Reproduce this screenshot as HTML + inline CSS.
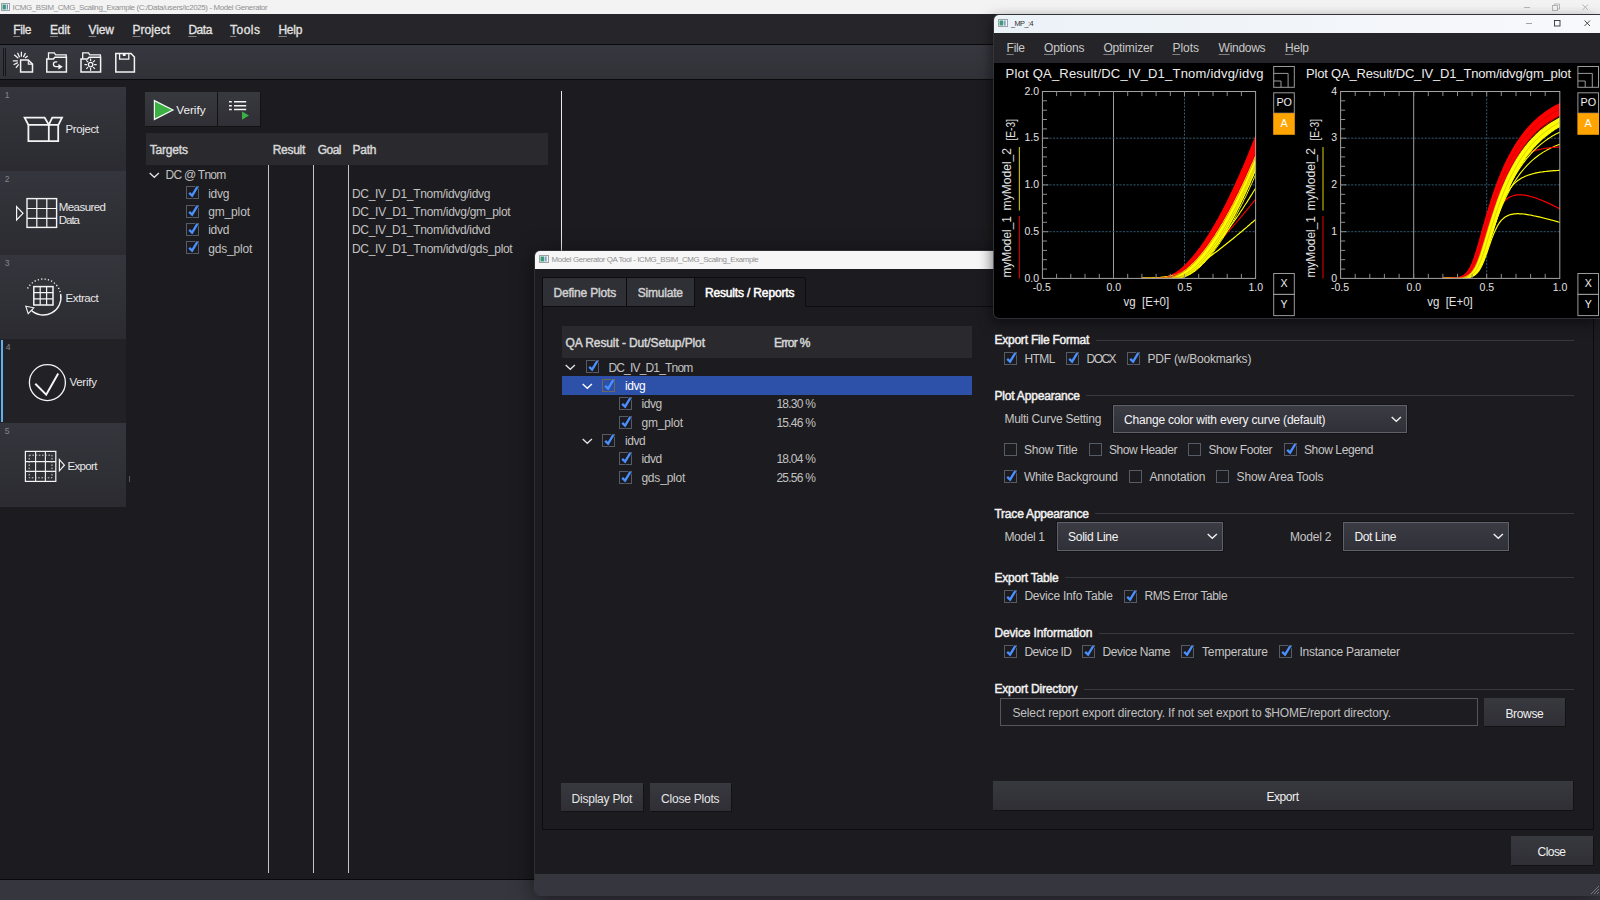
<!DOCTYPE html>
<html lang="en"><head><meta charset="utf-8"><title>Model Generator</title><style>
html,body{margin:0;padding:0;background:#1c1b1f}
body{width:1600px;height:900px;position:relative;overflow:hidden;font-family:"Liberation Sans",sans-serif}
.r{position:absolute;display:block}
.t{position:absolute;white-space:pre;line-height:20px;display:block}
.t u{text-decoration:underline;text-decoration-thickness:1px;text-underline-offset:2px;text-decoration-color:rgba(190,190,195,.6)}
</style></head><body>
<div class="r" style="left:0px;top:0px;width:1600px;height:14px;background:#f3f3f3;"></div>
<svg class="r" style="left:1px;top:3px" width="9" height="8" viewBox="0 0 9 8"><rect x="0.5" y="0.5" width="8" height="7" fill="#f4f6f7" stroke="#9aa4a8" stroke-width="1"/><rect x="1.5" y="1.5" width="3.4" height="5" fill="#3c9a78"/><rect x="5.8" y="1.5" width="0.9" height="5" fill="#3a5fb0"/></svg>
<span class="t" style="left:12.60px;top:-2.38px;font-size:7.9px;color:#909090;letter-spacing:-0.358px;">ICMG_BSIM_CMG_Scaling_Example (C:/Data/users/ic2025) - Model Generator</span>
<svg class="r" style="left:1515px;top:0" width="85" height="14" viewBox="0 0 85 14" fill="none" stroke="#a8a8a8" stroke-width="0.8"><path d="M9 7.5h6"/><rect x="37.5" y="5.5" width="5" height="5"/><path d="M39.5 5.5v-1.5h5v5h-2"/><path d="M67.5 4.5l5.5 5.5M73 4.5l-5.5 5.5"/></svg>
<div class="r" style="left:0px;top:14px;width:1600px;height:30px;background:#26262a;"></div>
<span class="t" style="left:13.20px;top:20.00px;font-size:12px;color:#e4e4e4;letter-spacing:-0.379px;-webkit-text-stroke:0.3px #e4e4e4;"><u>F</u>ile</span>
<span class="t" style="left:50.00px;top:20.00px;font-size:12px;color:#e4e4e4;letter-spacing:-0.226px;-webkit-text-stroke:0.3px #e4e4e4;"><u>E</u>dit</span>
<span class="t" style="left:88.60px;top:20.00px;font-size:12px;color:#e4e4e4;letter-spacing:-0.131px;-webkit-text-stroke:0.3px #e4e4e4;"><u>V</u>iew</span>
<span class="t" style="left:132.60px;top:20.00px;font-size:12px;color:#e4e4e4;letter-spacing:0.008px;-webkit-text-stroke:0.3px #e4e4e4;"><u>P</u>roject</span>
<span class="t" style="left:188.40px;top:20.00px;font-size:12px;color:#e4e4e4;letter-spacing:-0.449px;-webkit-text-stroke:0.3px #e4e4e4;"><u>D</u>ata</span>
<span class="t" style="left:230.00px;top:20.00px;font-size:12px;color:#e4e4e4;letter-spacing:0.496px;-webkit-text-stroke:0.3px #e4e4e4;"><u>T</u>ools</span>
<span class="t" style="left:278.40px;top:20.00px;font-size:12px;color:#e4e4e4;letter-spacing:-0.227px;-webkit-text-stroke:0.3px #e4e4e4;"><u>H</u>elp</span>
<div class="r" style="left:0px;top:44px;width:1600px;height:1px;background:#0a0a0c;"></div>
<div class="r" style="left:0px;top:45px;width:1600px;height:34px;background:linear-gradient(#37373f,#313138);"></div>
<div class="r" style="left:0px;top:79px;width:1600px;height:1px;background:#0a0a0c;"></div>
<div class="r" style="left:0px;top:80px;width:1600px;height:800px;background:#1c1b1f;"></div>
<div class="r" style="left:2.5px;top:48px;width:1px;height:28px;background:#15151a;"></div>
<div class="r" style="left:4.5px;top:48px;width:1px;height:28px;background:#15151a;"></div>
<svg class="r" style="left:12px;top:50px" width="126" height="25" viewBox="12 50 126 25" fill="none" stroke="#f4f4f4" stroke-width="1.5" stroke-linejoin="miter">
<path d="M25.0 58.0L27.7 55.9M23.4 57.1L25.5 53.0M21.4 56.8L21.4 51.8M19.6 57.2L17.5 52.7M18.3 58.2L14.2 54.8M17.8 60.8L12.8 60.8M17.8 62.6L13.6 64.8M18.7 64.3L15.9 67.9" stroke-width="1.25"/>
<path d="M20.6 59.9h7.7l4.2 4.2v7.9h-11.9z" fill="#34343b"/><path d="M28.3 59.9v4.2h4.2" stroke-width="1.1"/>
<path d="M46.8 59h6.5l1.6-1.8h11.5v14.8h-19.6z"/><path d="M48.5 59v-6.2h5.8l1.3 2h10.6v2.4" stroke-width="1.3"/>
<path d="M57.2 61.8h-1.4a2.4 2.4 0 0 0 0 4.8h3.2" stroke-width="1.3"/><path d="M58.4 64l4.4 2.7-4.4 2.7z" fill="#f4f4f4" stroke="none"/>
<path d="M81.0 59h6.5l1.6-1.8h11.5v14.8h-19.6z"/><path d="M82.7 59v-6.2h5.8l1.3 2h10.6v2.4" stroke-width="1.3"/>
<circle cx="90.6" cy="64.6" r="2.2" stroke-width="1.3"/><path d="M94.1 64.6L96.7 64.6M93.1 62.1L94.9 60.3M90.6 61.1L90.6 58.5M88.1 62.1L86.3 60.3M87.1 64.6L84.5 64.6M88.1 67.1L86.3 68.9M90.6 68.1L90.6 70.7M93.1 67.1L94.9 68.9" stroke-width="1.2"/>
<path d="M115.8 53.4h15.2l3.4 3.6v15.1h-18.6z"/><path d="M119.6 53.4v5.8h9.2v-5.8" stroke-width="1.3"/><rect x="122.8" y="53.6" width="2.8" height="2.4" fill="#f4f4f4" stroke="none"/>
</svg>
<div class="r" style="left:0px;top:87px;width:126px;height:84px;background:linear-gradient(#35353d,#2b2b31);"></div>
<span class="t" style="left:4.80px;top:85.38px;font-size:8.6px;color:#85858c;">1</span>
<div class="r" style="left:0px;top:171px;width:126px;height:84px;background:linear-gradient(#35353d,#2b2b31);"></div>
<span class="t" style="left:4.80px;top:169.38px;font-size:8.6px;color:#85858c;">2</span>
<div class="r" style="left:0px;top:255px;width:126px;height:84px;background:linear-gradient(#35353d,#2b2b31);"></div>
<span class="t" style="left:4.80px;top:253.38px;font-size:8.6px;color:#85858c;">3</span>
<div class="r" style="left:0px;top:339px;width:126px;height:84px;background:#222126;"></div>
<div class="r" style="left:1px;top:340px;width:2px;height:82px;background:#5fb0ee;"></div>
<span class="t" style="left:5.80px;top:337.38px;font-size:8.6px;color:#85858c;">4</span>
<div class="r" style="left:0px;top:423px;width:126px;height:84px;background:linear-gradient(#35353d,#2b2b31);"></div>
<span class="t" style="left:4.80px;top:421.38px;font-size:8.6px;color:#85858c;">5</span>
<span class="t" style="left:65.60px;top:119.18px;font-size:11.5px;color:#e8e8e8;letter-spacing:-0.399px;">Project</span>
<span class="t" style="left:58.75px;top:196.78px;font-size:11.5px;color:#e8e8e8;letter-spacing:-0.556px;">Measured</span>
<span class="t" style="left:58.75px;top:209.93px;font-size:11.5px;color:#e8e8e8;letter-spacing:-1.014px;">Data</span>
<span class="t" style="left:65.60px;top:288.18px;font-size:11.5px;color:#e8e8e8;letter-spacing:-0.439px;">Extract</span>
<span class="t" style="left:69.40px;top:372.18px;font-size:11.5px;color:#e8e8e8;letter-spacing:-0.233px;">Verify</span>
<span class="t" style="left:67.50px;top:456.18px;font-size:11.5px;color:#e8e8e8;letter-spacing:-0.648px;">Export</span>
<svg class="r" style="left:0;top:87px" width="126" height="420" viewBox="0 87 126 420" fill="none" stroke="#f4f4f4" stroke-width="1.3">
<g stroke-width="1.8"><path d="M28.4 124.8h29.8v16.4h-29.8z"/><path d="M48.8 124.8v16.4"/><path d="M28.4 124.8l-3.8-7.2h20l4.2 7.2 3.4-7.2h9.8l-3.6 7.2"/></g>
<path d="M16.6 206.6l6.4 6.7-6.4 6.7z" stroke-width="1.2"/>
<rect x="27" y="198.6" width="29.6" height="28.8" stroke-width="1.4"/><path d="M36.8 198.6v28.8M46.8 198.6v28.8M27 208.5h29.6M27 218.3h29.6" stroke-width="1.2"/>
<rect x="33.8" y="286.6" width="19.2" height="18.4" stroke-width="1.5"/><path d="M40.2 286.6v18.4M46.6 286.6v18.4M33.8 292.7h19.2M33.8 298.9h19.2" stroke-width="1.2"/>
<path d="M60.6 294a17.6 17.6 0 0 1-29.6 16" stroke-width="1.4"/><path d="M27.6 288.5a17.6 17.6 0 0 1 33 5.5" stroke-width="1.4" stroke-dasharray="1.2 2.2"/>
<path d="M25.8 306.2l8 1.6-5.6 5.8z" stroke-width="1.1" fill="#2e2e35"/>
<circle cx="47.4" cy="382.6" r="18" stroke-width="1.3"/><path d="M35.3 383.8l10.9 10.9 12-21.2" stroke-width="2"/>
<rect x="25.4" y="451.4" width="30.4" height="30" stroke-width="1.2"/><path d="M35.6 451.4v30M45.4 451.4v30M25.4 461.6h30.4M25.4 471.4h30.4" stroke-width="1.1"/>
<rect x="29.2" y="455.2" width="22.8" height="22.6" stroke-width="1" stroke-dasharray="1.6 1.6" stroke="#d0d0d0"/>
<path d="M59.4 459.6l5 5.6-5 5.6z" stroke-width="1.2"/>
</svg>
<div class="r" style="left:129px;top:476px;width:1px;height:6px;background:#55555c;"></div>
<div class="r" style="left:145px;top:91.5px;width:71.5px;height:34px;background:linear-gradient(#38383f,#2f2f35);box-shadow:1px 1px 0 #121214;"></div>
<div class="r" style="left:218px;top:91.5px;width:42px;height:34px;background:linear-gradient(#38383f,#2f2f35);box-shadow:1px 1px 0 #121214;"></div>
<svg class="r" style="left:150px;top:97px" width="30" height="26" viewBox="150 97 30 26"><path d="M154.4 100.6l18.6 9.4-18.6 9.4z" fill="#3bb143" stroke="#f6f6f6" stroke-width="1.2" stroke-linejoin="miter"/></svg>
<span class="t" style="left:176.20px;top:99.87px;font-size:11.8px;color:#f0f0f0;letter-spacing:-0.023px;">Verify</span>
<svg class="r" style="left:225px;top:98px" width="28" height="24" viewBox="225 98 28 24"><path d="M234 101.8h12.2M234 105.7h12.2M234 109.6h12.2" stroke="#f4f4f4" stroke-width="1.5"/><path d="M229 101.8h2.8M229 105.7h2.8M229 109.6h2.8" stroke="#f4f4f4" stroke-width="1.5"/><path d="M242 111.4l7 4.2-7 4.2z" fill="#3bb143"/></svg>
<div class="r" style="left:146px;top:133px;width:402px;height:32px;background:#29292e;"></div>
<span class="t" style="left:149.75px;top:139.60px;font-size:12px;color:#d6d6d6;letter-spacing:-0.184px;-webkit-text-stroke:0.45px #d6d6d6;">Targets</span>
<span class="t" style="left:272.75px;top:139.60px;font-size:12px;color:#d6d6d6;letter-spacing:-0.303px;-webkit-text-stroke:0.45px #d6d6d6;">Result</span>
<span class="t" style="left:317.75px;top:139.60px;font-size:12px;color:#d6d6d6;letter-spacing:-0.533px;-webkit-text-stroke:0.45px #d6d6d6;">Goal</span>
<span class="t" style="left:352.60px;top:139.60px;font-size:12px;color:#d6d6d6;letter-spacing:-0.262px;-webkit-text-stroke:0.45px #d6d6d6;">Path</span>
<div class="r" style="left:268px;top:165px;width:1px;height:708px;background:#c4c4c8;"></div>
<div class="r" style="left:313px;top:165px;width:1px;height:708px;background:#c4c4c8;"></div>
<div class="r" style="left:348px;top:165px;width:1px;height:708px;background:#c4c4c8;"></div>
<div class="r" style="left:561px;top:91px;width:1px;height:200px;background:#e8e8e8;"></div>
<svg class="r" style="left:149px;top:171.8px" width="11" height="7" viewBox="0 0 11 7"><path d="M0.7 0.9l4.6 4.3 4.6-4.3" fill="none" stroke="#e0e0e0" stroke-width="1.4"/></svg>
<span class="t" style="left:165.60px;top:164.80px;font-size:12px;color:#c2c2c2;letter-spacing:-0.749px;">DC @ Tnom</span>
<svg class="r" style="left:184px;top:184.3px" width="17" height="17" viewBox="-2 -2 17 17"><rect x="0.5" y="0.5" width="12" height="12" fill="none" stroke="#565b68" stroke-width="1"/><path d="M3.2 6.9l2.9 2.7 5.2-8.6" fill="none" stroke="#1c1b1f" stroke-width="4"/><path d="M3.2 6.9l2.9 2.7 5.2-8.6" fill="none" stroke="#4a90ff" stroke-width="2.4" stroke-linejoin="miter"/></svg>
<span class="t" style="left:208.20px;top:183.60px;font-size:12px;color:#c2c2c2;letter-spacing:-0.238px;">idvg</span>
<span class="t" style="left:352.00px;top:183.60px;font-size:12px;color:#c2c2c2;letter-spacing:-0.318px;">DC_IV_D1_Tnom/idvg/idvg</span>
<svg class="r" style="left:184px;top:202.6px" width="17" height="17" viewBox="-2 -2 17 17"><rect x="0.5" y="0.5" width="12" height="12" fill="none" stroke="#565b68" stroke-width="1"/><path d="M3.2 6.9l2.9 2.7 5.2-8.6" fill="none" stroke="#1c1b1f" stroke-width="4"/><path d="M3.2 6.9l2.9 2.7 5.2-8.6" fill="none" stroke="#4a90ff" stroke-width="2.4" stroke-linejoin="miter"/></svg>
<span class="t" style="left:208.20px;top:201.90px;font-size:12px;color:#c2c2c2;letter-spacing:-0.149px;">gm_plot</span>
<span class="t" style="left:352.00px;top:201.90px;font-size:12px;color:#c2c2c2;letter-spacing:-0.299px;">DC_IV_D1_Tnom/idvg/gm_plot</span>
<svg class="r" style="left:184px;top:220.9px" width="17" height="17" viewBox="-2 -2 17 17"><rect x="0.5" y="0.5" width="12" height="12" fill="none" stroke="#565b68" stroke-width="1"/><path d="M3.2 6.9l2.9 2.7 5.2-8.6" fill="none" stroke="#1c1b1f" stroke-width="4"/><path d="M3.2 6.9l2.9 2.7 5.2-8.6" fill="none" stroke="#4a90ff" stroke-width="2.4" stroke-linejoin="miter"/></svg>
<span class="t" style="left:208.20px;top:220.20px;font-size:12px;color:#c2c2c2;letter-spacing:-0.238px;">idvd</span>
<span class="t" style="left:352.00px;top:220.20px;font-size:12px;color:#c2c2c2;letter-spacing:-0.318px;">DC_IV_D1_Tnom/idvd/idvd</span>
<svg class="r" style="left:184px;top:239.2px" width="17" height="17" viewBox="-2 -2 17 17"><rect x="0.5" y="0.5" width="12" height="12" fill="none" stroke="#565b68" stroke-width="1"/><path d="M3.2 6.9l2.9 2.7 5.2-8.6" fill="none" stroke="#1c1b1f" stroke-width="4"/><path d="M3.2 6.9l2.9 2.7 5.2-8.6" fill="none" stroke="#4a90ff" stroke-width="2.4" stroke-linejoin="miter"/></svg>
<span class="t" style="left:208.20px;top:238.50px;font-size:12px;color:#c2c2c2;letter-spacing:-0.167px;">gds_plot</span>
<span class="t" style="left:352.00px;top:238.50px;font-size:12px;color:#c2c2c2;letter-spacing:-0.310px;">DC_IV_D1_Tnom/idvd/gds_plot</span>
<div class="r" style="left:0px;top:879px;width:1600px;height:1px;background:#0a0a0c;"></div>
<div class="r" style="left:0px;top:880px;width:1600px;height:20px;background:#36363e;"></div>
<div class="r" style="left:535px;top:251px;width:1065px;height:644px;background:#1c1b1f;border-radius:5px 0 0 5px;box-shadow:0 0 0 1px rgba(70,70,78,.55), -1px 4px 22px rgba(0,0,0,.55);overflow:hidden"></div>
<div class="r" style="left:535px;top:251px;width:1065px;height:18px;background:#f6f6f6;border-radius:5px 0 0 0;"></div>
<svg class="r" style="left:539px;top:255px" width="10" height="8" viewBox="0 0 10 8"><rect x="0.5" y="0.5" width="9" height="7" fill="#f4f6f7" stroke="#9aa4a8" stroke-width="1"/><rect x="1.5" y="1.5" width="3.8" height="5" fill="#3c9a78"/><rect x="6.4" y="1.5" width="1" height="5" fill="#3a5fb0"/></svg>
<span class="t" style="left:551.60px;top:249.82px;font-size:7.9px;color:#909090;letter-spacing:-0.393px;">Model Generator QA Tool - ICMG_BSIM_CMG_Scaling_Example</span>
<div class="r" style="left:535px;top:874px;width:1065px;height:21px;background:#36363e;border-radius:0 0 0 5px;"></div>
<svg class="r" style="left:1588px;top:883px" width="12" height="12" viewBox="0 0 12 12"><path d="M3 11l8-8M6 11l5-5M9 11l2-2" stroke="#777780" stroke-width="1"/></svg>
<div class="r" style="left:542px;top:306px;width:1050px;height:522px;border:1px solid #0c0c0e;box-sizing:content-box"></div>
<div class="r" style="left:543px;top:278px;width:83px;height:28px;background:#2f2f36;box-shadow:0 0 0 1px #0c0c0e;"></div>
<div class="r" style="left:627px;top:278px;width:67px;height:28px;background:#2f2f36;box-shadow:0 0 0 1px #0c0c0e;"></div>
<div class="r" style="left:695px;top:278px;width:110px;height:29px;background:#1c1b1f;box-shadow:1px 0 0 #0c0c0e,-1px 0 0 #0c0c0e,0 -1px 0 #0c0c0e;"></div>
<span class="t" style="left:553.40px;top:282.60px;font-size:12px;color:#d0d0d0;letter-spacing:-0.168px;-webkit-text-stroke:0.45px #d0d0d0;">Define Plots</span>
<span class="t" style="left:637.75px;top:282.60px;font-size:12px;color:#d0d0d0;letter-spacing:-0.206px;-webkit-text-stroke:0.45px #d0d0d0;">Simulate</span>
<span class="t" style="left:705.00px;top:283.00px;font-size:12px;color:#ffffff;letter-spacing:-0.165px;-webkit-text-stroke:0.5px #fff;">Results / Reports</span>
<div class="r" style="left:562px;top:326px;width:410px;height:32px;background:#29292e;"></div>
<span class="t" style="left:565.60px;top:332.60px;font-size:12px;color:#d6d6d6;letter-spacing:-0.107px;-webkit-text-stroke:0.45px #d6d6d6;">QA Result - Dut/Setup/Plot</span>
<span class="t" style="left:774.00px;top:332.60px;font-size:12px;color:#d6d6d6;letter-spacing:-0.712px;-webkit-text-stroke:0.45px #d6d6d6;">Error %</span>
<div class="r" style="left:562px;top:376px;width:410px;height:18.6px;background:#2d50a9;"></div>
<svg class="r" style="left:565px;top:364.2px" width="11" height="7" viewBox="0 0 11 7"><path d="M0.7 0.9l4.6 4.3 4.6-4.3" fill="none" stroke="#e0e0e0" stroke-width="1.4"/></svg>
<svg class="r" style="left:583.6px;top:358.4px" width="17" height="17" viewBox="-2 -2 17 17"><rect x="0.5" y="0.5" width="12" height="12" fill="none" stroke="#565b68" stroke-width="1"/><path d="M3.2 6.9l2.9 2.7 5.2-8.6" fill="none" stroke="#1c1b1f" stroke-width="4"/><path d="M3.2 6.9l2.9 2.7 5.2-8.6" fill="none" stroke="#4a90ff" stroke-width="2.4" stroke-linejoin="miter"/></svg>
<span class="t" style="left:608.40px;top:357.60px;font-size:12px;color:#c2c2c2;letter-spacing:-0.817px;">DC_IV_D1_Tnom</span>
<svg class="r" style="left:582.2px;top:382.8px" width="11" height="7" viewBox="0 0 11 7"><path d="M0.7 0.9l4.6 4.3 4.6-4.3" fill="none" stroke="#ffffff" stroke-width="1.4"/></svg>
<svg class="r" style="left:600.4px;top:376.8px" width="17" height="17" viewBox="-2 -2 17 17"><rect x="0.5" y="0.5" width="12" height="12" fill="none" stroke="#6c6a58" stroke-width="1"/><path d="M3.2 6.9l2.9 2.7 5.2-8.6" fill="none" stroke="#2d50a9" stroke-width="4"/><path d="M3.2 6.9l2.9 2.7 5.2-8.6" fill="none" stroke="#4a90ff" stroke-width="2.4" stroke-linejoin="miter"/></svg>
<span class="t" style="left:625.00px;top:375.80px;font-size:12px;color:#ffffff;letter-spacing:-0.438px;">idvg</span>
<svg class="r" style="left:617px;top:395.4px" width="17" height="17" viewBox="-2 -2 17 17"><rect x="0.5" y="0.5" width="12" height="12" fill="none" stroke="#565b68" stroke-width="1"/><path d="M3.2 6.9l2.9 2.7 5.2-8.6" fill="none" stroke="#1c1b1f" stroke-width="4"/><path d="M3.2 6.9l2.9 2.7 5.2-8.6" fill="none" stroke="#4a90ff" stroke-width="2.4" stroke-linejoin="miter"/></svg>
<span class="t" style="left:641.40px;top:394.20px;font-size:12px;color:#c2c2c2;letter-spacing:-0.371px;">idvg</span>
<span class="t" style="left:776.40px;top:394.20px;font-size:12px;color:#c2c2c2;letter-spacing:-0.739px;">18.30 %</span>
<svg class="r" style="left:617px;top:413.8px" width="17" height="17" viewBox="-2 -2 17 17"><rect x="0.5" y="0.5" width="12" height="12" fill="none" stroke="#565b68" stroke-width="1"/><path d="M3.2 6.9l2.9 2.7 5.2-8.6" fill="none" stroke="#1c1b1f" stroke-width="4"/><path d="M3.2 6.9l2.9 2.7 5.2-8.6" fill="none" stroke="#4a90ff" stroke-width="2.4" stroke-linejoin="miter"/></svg>
<span class="t" style="left:641.40px;top:412.60px;font-size:12px;color:#c2c2c2;letter-spacing:-0.182px;">gm_plot</span>
<span class="t" style="left:776.40px;top:412.60px;font-size:12px;color:#c2c2c2;letter-spacing:-0.739px;">15.46 %</span>
<svg class="r" style="left:582.2px;top:437.8px" width="11" height="7" viewBox="0 0 11 7"><path d="M0.7 0.9l4.6 4.3 4.6-4.3" fill="none" stroke="#e0e0e0" stroke-width="1.4"/></svg>
<svg class="r" style="left:600.4px;top:432px" width="17" height="17" viewBox="-2 -2 17 17"><rect x="0.5" y="0.5" width="12" height="12" fill="none" stroke="#565b68" stroke-width="1"/><path d="M3.2 6.9l2.9 2.7 5.2-8.6" fill="none" stroke="#1c1b1f" stroke-width="4"/><path d="M3.2 6.9l2.9 2.7 5.2-8.6" fill="none" stroke="#4a90ff" stroke-width="2.4" stroke-linejoin="miter"/></svg>
<span class="t" style="left:625.00px;top:430.80px;font-size:12px;color:#c2c2c2;letter-spacing:-0.438px;">idvd</span>
<svg class="r" style="left:617px;top:450.4px" width="17" height="17" viewBox="-2 -2 17 17"><rect x="0.5" y="0.5" width="12" height="12" fill="none" stroke="#565b68" stroke-width="1"/><path d="M3.2 6.9l2.9 2.7 5.2-8.6" fill="none" stroke="#1c1b1f" stroke-width="4"/><path d="M3.2 6.9l2.9 2.7 5.2-8.6" fill="none" stroke="#4a90ff" stroke-width="2.4" stroke-linejoin="miter"/></svg>
<span class="t" style="left:641.40px;top:449.20px;font-size:12px;color:#c2c2c2;letter-spacing:-0.371px;">idvd</span>
<span class="t" style="left:776.40px;top:449.20px;font-size:12px;color:#c2c2c2;letter-spacing:-0.739px;">18.04 %</span>
<svg class="r" style="left:617px;top:468.8px" width="17" height="17" viewBox="-2 -2 17 17"><rect x="0.5" y="0.5" width="12" height="12" fill="none" stroke="#565b68" stroke-width="1"/><path d="M3.2 6.9l2.9 2.7 5.2-8.6" fill="none" stroke="#1c1b1f" stroke-width="4"/><path d="M3.2 6.9l2.9 2.7 5.2-8.6" fill="none" stroke="#4a90ff" stroke-width="2.4" stroke-linejoin="miter"/></svg>
<span class="t" style="left:641.40px;top:467.60px;font-size:12px;color:#c2c2c2;letter-spacing:-0.196px;">gds_plot</span>
<span class="t" style="left:776.40px;top:467.60px;font-size:12px;color:#c2c2c2;letter-spacing:-0.739px;">25.56 %</span>
<div class="r" style="left:561px;top:783.2px;width:82px;height:27.6px;background:linear-gradient(#38383f,#2f2f35);box-shadow:1px 1px 0 #121214;"></div>
<span class="t" style="left:571.60px;top:788.80px;font-size:12px;color:#e6e6e6;letter-spacing:-0.233px;">Display Plot</span>
<div class="r" style="left:649.5px;top:783.2px;width:81.5px;height:27.6px;background:linear-gradient(#38383f,#2f2f35);box-shadow:1px 1px 0 #121214;"></div>
<span class="t" style="left:661.00px;top:788.80px;font-size:12px;color:#e6e6e6;letter-spacing:-0.209px;">Close Plots</span>
<span class="t" style="left:994.40px;top:330.40px;font-size:12px;color:#f2f2f2;letter-spacing:-0.217px;-webkit-text-stroke:0.45px #f2f2f2;">Export File Format</span>
<div class="r" style="left:1096px;top:339.5px;width:477.6px;height:1px;background:#38383e;"></div>
<svg class="r" style="left:1002px;top:350.2px" width="17" height="17" viewBox="-2 -2 17 17"><rect x="0.5" y="0.5" width="12" height="12" fill="none" stroke="#565b68" stroke-width="1"/><path d="M3.2 6.9l2.9 2.7 5.2-8.6" fill="none" stroke="#1c1b1f" stroke-width="4"/><path d="M3.2 6.9l2.9 2.7 5.2-8.6" fill="none" stroke="#4a90ff" stroke-width="2.4" stroke-linejoin="miter"/></svg>
<span class="t" style="left:1024.40px;top:349.00px;font-size:12px;color:#c6c6c6;letter-spacing:-0.556px;">HTML</span>
<svg class="r" style="left:1064px;top:350.2px" width="17" height="17" viewBox="-2 -2 17 17"><rect x="0.5" y="0.5" width="12" height="12" fill="none" stroke="#565b68" stroke-width="1"/><path d="M3.2 6.9l2.9 2.7 5.2-8.6" fill="none" stroke="#1c1b1f" stroke-width="4"/><path d="M3.2 6.9l2.9 2.7 5.2-8.6" fill="none" stroke="#4a90ff" stroke-width="2.4" stroke-linejoin="miter"/></svg>
<span class="t" style="left:1086.60px;top:349.00px;font-size:12px;color:#c6c6c6;letter-spacing:-1.557px;">DOCX</span>
<svg class="r" style="left:1125px;top:350.2px" width="17" height="17" viewBox="-2 -2 17 17"><rect x="0.5" y="0.5" width="12" height="12" fill="none" stroke="#565b68" stroke-width="1"/><path d="M3.2 6.9l2.9 2.7 5.2-8.6" fill="none" stroke="#1c1b1f" stroke-width="4"/><path d="M3.2 6.9l2.9 2.7 5.2-8.6" fill="none" stroke="#4a90ff" stroke-width="2.4" stroke-linejoin="miter"/></svg>
<span class="t" style="left:1147.40px;top:349.00px;font-size:12px;color:#c6c6c6;letter-spacing:-0.209px;">PDF (w/Bookmarks)</span>
<span class="t" style="left:994.40px;top:386.00px;font-size:12px;color:#f2f2f2;letter-spacing:-0.176px;-webkit-text-stroke:0.45px #f2f2f2;">Plot Appearance</span>
<div class="r" style="left:1086px;top:395.4px;width:487.6px;height:1px;background:#38383e;"></div>
<span class="t" style="left:1004.40px;top:409.00px;font-size:12px;color:#c6c6c6;letter-spacing:-0.243px;">Multi Curve Setting</span>
<div class="r" style="left:1112.5px;top:404.5px;width:294.5px;height:28.5px;background:linear-gradient(#3b3b44,#303038);box-sizing:border-box;border:1px solid #60606a;box-shadow:0 0 0 1px #141416;"></div>
<span class="t" style="left:1124.00px;top:409.60px;font-size:12px;color:#f4f4f4;letter-spacing:-0.189px;">Change color with every curve (default)</span>
<svg class="r" style="left:1390.9px;top:415.95px" width="11" height="7" viewBox="0 0 11 7"><path d="M0.7 0.9l4.6 4.3 4.6-4.3" fill="none" stroke="#f0f0f0" stroke-width="1.4"/></svg>
<svg class="r" style="left:1002px;top:441px" width="17" height="17" viewBox="-2 -2 17 17"><rect x="0.5" y="0.5" width="12" height="12" fill="none" stroke="#565b68" stroke-width="1"/></svg>
<span class="t" style="left:1024.00px;top:440.00px;font-size:12px;color:#c6c6c6;letter-spacing:-0.196px;">Show Title</span>
<svg class="r" style="left:1087px;top:441px" width="17" height="17" viewBox="-2 -2 17 17"><rect x="0.5" y="0.5" width="12" height="12" fill="none" stroke="#565b68" stroke-width="1"/></svg>
<span class="t" style="left:1109.00px;top:440.00px;font-size:12px;color:#c6c6c6;letter-spacing:-0.431px;">Show Header</span>
<svg class="r" style="left:1186px;top:441px" width="17" height="17" viewBox="-2 -2 17 17"><rect x="0.5" y="0.5" width="12" height="12" fill="none" stroke="#565b68" stroke-width="1"/></svg>
<span class="t" style="left:1208.40px;top:440.00px;font-size:12px;color:#c6c6c6;letter-spacing:-0.384px;">Show Footer</span>
<svg class="r" style="left:1282px;top:441px" width="17" height="17" viewBox="-2 -2 17 17"><rect x="0.5" y="0.5" width="12" height="12" fill="none" stroke="#565b68" stroke-width="1"/><path d="M3.2 6.9l2.9 2.7 5.2-8.6" fill="none" stroke="#1c1b1f" stroke-width="4"/><path d="M3.2 6.9l2.9 2.7 5.2-8.6" fill="none" stroke="#4a90ff" stroke-width="2.4" stroke-linejoin="miter"/></svg>
<span class="t" style="left:1304.00px;top:440.00px;font-size:12px;color:#c6c6c6;letter-spacing:-0.400px;">Show Legend</span>
<svg class="r" style="left:1002px;top:467.9px" width="17" height="17" viewBox="-2 -2 17 17"><rect x="0.5" y="0.5" width="12" height="12" fill="none" stroke="#565b68" stroke-width="1"/><path d="M3.2 6.9l2.9 2.7 5.2-8.6" fill="none" stroke="#1c1b1f" stroke-width="4"/><path d="M3.2 6.9l2.9 2.7 5.2-8.6" fill="none" stroke="#4a90ff" stroke-width="2.4" stroke-linejoin="miter"/></svg>
<span class="t" style="left:1024.00px;top:466.80px;font-size:12px;color:#c6c6c6;letter-spacing:-0.270px;">White Background</span>
<svg class="r" style="left:1127px;top:467.9px" width="17" height="17" viewBox="-2 -2 17 17"><rect x="0.5" y="0.5" width="12" height="12" fill="none" stroke="#565b68" stroke-width="1"/></svg>
<span class="t" style="left:1149.40px;top:466.80px;font-size:12px;color:#c6c6c6;letter-spacing:-0.154px;">Annotation</span>
<svg class="r" style="left:1214.4px;top:467.9px" width="17" height="17" viewBox="-2 -2 17 17"><rect x="0.5" y="0.5" width="12" height="12" fill="none" stroke="#565b68" stroke-width="1"/></svg>
<span class="t" style="left:1236.60px;top:466.80px;font-size:12px;color:#c6c6c6;letter-spacing:-0.155px;">Show Area Tools</span>
<span class="t" style="left:994.40px;top:503.60px;font-size:12px;color:#f2f2f2;letter-spacing:-0.201px;-webkit-text-stroke:0.45px #f2f2f2;">Trace Appearance</span>
<div class="r" style="left:1095px;top:513.4px;width:478.6px;height:1px;background:#38383e;"></div>
<span class="t" style="left:1004.40px;top:526.60px;font-size:12px;color:#c6c6c6;letter-spacing:-0.349px;">Model 1</span>
<div class="r" style="left:1057px;top:522px;width:166px;height:28.5px;background:linear-gradient(#3b3b44,#303038);box-sizing:border-box;border:1px solid #60606a;box-shadow:0 0 0 1px #141416;"></div>
<span class="t" style="left:1068.00px;top:526.80px;font-size:12px;color:#f4f4f4;letter-spacing:-0.256px;">Solid Line</span>
<svg class="r" style="left:1206.9px;top:533.45px" width="11" height="7" viewBox="0 0 11 7"><path d="M0.7 0.9l4.6 4.3 4.6-4.3" fill="none" stroke="#f0f0f0" stroke-width="1.4"/></svg>
<span class="t" style="left:1290.00px;top:526.60px;font-size:12px;color:#c6c6c6;letter-spacing:-0.215px;">Model 2</span>
<div class="r" style="left:1342.6px;top:522px;width:166.4px;height:28.5px;background:linear-gradient(#3b3b44,#303038);box-sizing:border-box;border:1px solid #60606a;box-shadow:0 0 0 1px #141416;"></div>
<span class="t" style="left:1354.40px;top:526.80px;font-size:12px;color:#f4f4f4;letter-spacing:-0.385px;">Dot Line</span>
<svg class="r" style="left:1492.9px;top:533.45px" width="11" height="7" viewBox="0 0 11 7"><path d="M0.7 0.9l4.6 4.3 4.6-4.3" fill="none" stroke="#f0f0f0" stroke-width="1.4"/></svg>
<span class="t" style="left:994.40px;top:567.60px;font-size:12px;color:#f2f2f2;letter-spacing:-0.208px;-webkit-text-stroke:0.45px #f2f2f2;">Export Table</span>
<div class="r" style="left:1065px;top:577.4px;width:508.6px;height:1px;background:#38383e;"></div>
<svg class="r" style="left:1002px;top:587.7px" width="17" height="17" viewBox="-2 -2 17 17"><rect x="0.5" y="0.5" width="12" height="12" fill="none" stroke="#565b68" stroke-width="1"/><path d="M3.2 6.9l2.9 2.7 5.2-8.6" fill="none" stroke="#1c1b1f" stroke-width="4"/><path d="M3.2 6.9l2.9 2.7 5.2-8.6" fill="none" stroke="#4a90ff" stroke-width="2.4" stroke-linejoin="miter"/></svg>
<span class="t" style="left:1024.40px;top:586.40px;font-size:12px;color:#c6c6c6;letter-spacing:-0.202px;">Device Info Table</span>
<svg class="r" style="left:1122px;top:587.7px" width="17" height="17" viewBox="-2 -2 17 17"><rect x="0.5" y="0.5" width="12" height="12" fill="none" stroke="#565b68" stroke-width="1"/><path d="M3.2 6.9l2.9 2.7 5.2-8.6" fill="none" stroke="#1c1b1f" stroke-width="4"/><path d="M3.2 6.9l2.9 2.7 5.2-8.6" fill="none" stroke="#4a90ff" stroke-width="2.4" stroke-linejoin="miter"/></svg>
<span class="t" style="left:1144.40px;top:586.40px;font-size:12px;color:#c6c6c6;letter-spacing:-0.377px;">RMS Error Table</span>
<span class="t" style="left:994.40px;top:623.40px;font-size:12px;color:#f2f2f2;letter-spacing:-0.120px;-webkit-text-stroke:0.45px #f2f2f2;">Device Information</span>
<div class="r" style="left:1099px;top:633px;width:474.6px;height:1px;background:#38383e;"></div>
<svg class="r" style="left:1002px;top:643.4px" width="17" height="17" viewBox="-2 -2 17 17"><rect x="0.5" y="0.5" width="12" height="12" fill="none" stroke="#565b68" stroke-width="1"/><path d="M3.2 6.9l2.9 2.7 5.2-8.6" fill="none" stroke="#1c1b1f" stroke-width="4"/><path d="M3.2 6.9l2.9 2.7 5.2-8.6" fill="none" stroke="#4a90ff" stroke-width="2.4" stroke-linejoin="miter"/></svg>
<span class="t" style="left:1024.40px;top:641.80px;font-size:12px;color:#c6c6c6;letter-spacing:-0.552px;">Device ID</span>
<svg class="r" style="left:1080.4px;top:643.4px" width="17" height="17" viewBox="-2 -2 17 17"><rect x="0.5" y="0.5" width="12" height="12" fill="none" stroke="#565b68" stroke-width="1"/><path d="M3.2 6.9l2.9 2.7 5.2-8.6" fill="none" stroke="#1c1b1f" stroke-width="4"/><path d="M3.2 6.9l2.9 2.7 5.2-8.6" fill="none" stroke="#4a90ff" stroke-width="2.4" stroke-linejoin="miter"/></svg>
<span class="t" style="left:1102.60px;top:641.80px;font-size:12px;color:#c6c6c6;letter-spacing:-0.423px;">Device Name</span>
<svg class="r" style="left:1179.4px;top:643.4px" width="17" height="17" viewBox="-2 -2 17 17"><rect x="0.5" y="0.5" width="12" height="12" fill="none" stroke="#565b68" stroke-width="1"/><path d="M3.2 6.9l2.9 2.7 5.2-8.6" fill="none" stroke="#1c1b1f" stroke-width="4"/><path d="M3.2 6.9l2.9 2.7 5.2-8.6" fill="none" stroke="#4a90ff" stroke-width="2.4" stroke-linejoin="miter"/></svg>
<span class="t" style="left:1202.00px;top:641.80px;font-size:12px;color:#c6c6c6;letter-spacing:-0.137px;">Temperature</span>
<svg class="r" style="left:1277px;top:643.4px" width="17" height="17" viewBox="-2 -2 17 17"><rect x="0.5" y="0.5" width="12" height="12" fill="none" stroke="#565b68" stroke-width="1"/><path d="M3.2 6.9l2.9 2.7 5.2-8.6" fill="none" stroke="#1c1b1f" stroke-width="4"/><path d="M3.2 6.9l2.9 2.7 5.2-8.6" fill="none" stroke="#4a90ff" stroke-width="2.4" stroke-linejoin="miter"/></svg>
<span class="t" style="left:1299.40px;top:641.80px;font-size:12px;color:#c6c6c6;letter-spacing:-0.242px;">Instance Parameter</span>
<span class="t" style="left:994.40px;top:679.00px;font-size:12px;color:#f2f2f2;letter-spacing:-0.188px;-webkit-text-stroke:0.45px #f2f2f2;">Export Directory</span>
<div class="r" style="left:1084px;top:689px;width:489.6px;height:1px;background:#38383e;"></div>
<div class="r" style="left:999.5px;top:698px;width:478px;height:27.6px;background:#1d1c20;box-sizing:border-box;border:1px solid #55555c;"></div>
<span class="t" style="left:1012.40px;top:702.60px;font-size:12px;color:#c0c0c0;letter-spacing:-0.130px;">Select report export directory. If not set export to $HOME/report directory.</span>
<div class="r" style="left:1483.7px;top:698px;width:81.3px;height:27.6px;background:linear-gradient(#38383f,#2f2f35);box-shadow:1px 1px 0 #121214;"></div>
<span class="t" style="left:1505.40px;top:704.00px;font-size:12px;color:#f0f0f0;letter-spacing:-0.323px;">Browse</span>
<div class="r" style="left:993px;top:781px;width:580px;height:28.6px;background:linear-gradient(#38383f,#2f2f35);box-shadow:1px 1px 0 #121214;"></div>
<span class="t" style="left:1266.40px;top:787.00px;font-size:12px;color:#f0f0f0;letter-spacing:-0.417px;">Export</span>
<div class="r" style="left:1511px;top:836px;width:81.8px;height:28.6px;background:linear-gradient(#38383f,#2f2f35);box-shadow:1px 1px 0 #121214;"></div>
<span class="t" style="left:1537.60px;top:841.80px;font-size:12px;color:#f0f0f0;letter-spacing:-0.570px;">Close</span>
<div class="r" style="left:994px;top:14.5px;width:606px;height:303.5px;background:#000;border-radius:5px 0 0 5px;box-shadow:0 0 0 1px rgba(60,60,66,.7), -2px 4px 14px rgba(0,0,0,.55)"></div>
<div class="r" style="left:994px;top:14.5px;width:606px;height:18px;background:linear-gradient(90deg,#ebf2f8,#f0f4f9 40%,#f8f9fb);border-radius:5px 0 0 0;"></div>
<svg class="r" style="left:998px;top:19px" width="10" height="8" viewBox="0 0 10 8"><rect x="0.5" y="0.5" width="9" height="7" fill="#f4f6f7" stroke="#9aa4a8" stroke-width="1"/><rect x="1.5" y="1.5" width="3.8" height="5" fill="#3c9a78"/><rect x="6.4" y="1.5" width="1" height="5" fill="#3a5fb0"/></svg>
<span class="t" style="left:1011.00px;top:14.03px;font-size:7.3px;color:#303030;letter-spacing:-0.512px;">_MP_:4</span>
<svg class="r" style="left:1515px;top:14px" width="85" height="18" viewBox="0 0 85 18" fill="none" stroke="#333" stroke-width="0.9"><path d="M11 9.5h6" stroke="#999"/><rect x="39.5" y="6.5" width="5.5" height="5.5"/><path d="M69.5 6.5l5.5 5.5M75 6.5l-5.5 5.5"/></svg>
<div class="r" style="left:994px;top:32.5px;width:606px;height:30.2px;background:#252529;"></div>
<span class="t" style="left:1006.60px;top:37.80px;font-size:12px;color:#c8c8c8;letter-spacing:-0.312px;"><u>F</u>ile</span>
<span class="t" style="left:1044.00px;top:37.80px;font-size:12px;color:#c8c8c8;letter-spacing:-0.159px;"><u>O</u>ptions</span>
<span class="t" style="left:1103.40px;top:37.80px;font-size:12px;color:#c8c8c8;letter-spacing:-0.143px;"><u>O</u>ptimizer</span>
<span class="t" style="left:1172.40px;top:37.80px;font-size:12px;color:#c8c8c8;letter-spacing:-0.020px;"><u>P</u>lots</span>
<span class="t" style="left:1218.60px;top:37.80px;font-size:12px;color:#c8c8c8;letter-spacing:-0.280px;"><u>W</u>indows</span>
<span class="t" style="left:1285.00px;top:37.80px;font-size:12px;color:#c8c8c8;letter-spacing:-0.227px;"><u>H</u>elp</span>
<svg class="r" style="left:994px;top:63px;font-family:'Liberation Sans',sans-serif" width="606" height="255" viewBox="994 63 606 255"><path d="M1113.5 91.5V278.4" stroke="#a0a0a0" stroke-width="1"/><path d="M1184.5 91.5V278.4" stroke="#31566c" stroke-width="1" stroke-dasharray="2.2 1.3"/><path d="M1042.4 231.7H1255.6" stroke="#31566c" stroke-width="1" stroke-dasharray="2.2 1.3"/><path d="M1042.4 184.9H1255.6" stroke="#31566c" stroke-width="1" stroke-dasharray="2.2 1.3"/><path d="M1042.4 138.2H1255.6" stroke="#31566c" stroke-width="1" stroke-dasharray="2.2 1.3"/><clipPath id="cp1042"><rect x="1042.4" y="90.5" width="213.6" height="188.5"/></clipPath><g clip-path="url(#cp1042)" fill="none" stroke-linejoin="round"><polygon points="1141.9,278.4 1143.2,278.4 1144.4,278.4 1145.7,278.4 1146.9,278.4 1148.2,278.4 1149.5,278.4 1150.7,278.4 1152.0,278.4 1153.3,278.4 1154.5,278.4 1155.8,278.4 1157.1,278.4 1158.3,278.4 1159.6,278.4 1160.8,278.3 1162.1,278.3 1163.4,278.3 1164.6,278.2 1165.9,278.1 1167.2,278.0 1168.4,277.9 1169.7,277.7 1171.0,277.5 1172.2,277.2 1173.5,276.8 1174.7,276.4 1176.0,276.0 1177.3,275.5 1178.5,274.9 1179.8,274.2 1181.1,273.5 1182.3,272.8 1183.6,271.9 1184.8,271.1 1186.1,270.1 1187.4,269.2 1188.6,268.1 1189.9,267.0 1191.2,265.9 1192.4,264.7 1193.7,263.5 1195.0,262.3 1196.2,260.9 1197.5,259.6 1198.7,258.2 1200.0,256.8 1201.3,255.3 1202.5,253.8 1203.8,252.2 1205.1,250.6 1206.3,249.0 1207.6,247.3 1208.9,245.6 1210.1,243.8 1211.4,242.0 1212.6,240.2 1213.9,238.3 1215.2,236.4 1216.4,234.5 1217.7,232.5 1219.0,230.5 1220.2,228.5 1221.5,226.4 1222.8,224.3 1224.0,222.1 1225.3,220.0 1226.5,217.8 1227.8,215.5 1229.1,213.2 1230.3,210.9 1231.6,208.6 1232.9,206.2 1234.1,203.8 1235.4,201.3 1236.6,198.8 1237.9,196.3 1239.2,193.8 1240.4,191.2 1241.7,188.6 1243.0,185.9 1244.2,183.3 1245.5,180.6 1246.8,177.8 1248.0,175.1 1249.3,172.3 1250.5,169.5 1251.8,166.6 1253.1,163.7 1254.3,160.8 1255.6,157.8 1255.6,136.4 1254.3,139.6 1253.1,142.8 1251.8,146.0 1250.5,149.2 1249.3,152.3 1248.0,155.4 1246.8,158.4 1245.5,161.5 1244.2,164.4 1243.0,167.4 1241.7,170.3 1240.4,173.2 1239.2,176.1 1237.9,178.9 1236.6,181.7 1235.4,184.5 1234.1,187.2 1232.9,189.9 1231.6,192.6 1230.3,195.2 1229.1,197.8 1227.8,200.4 1226.5,202.9 1225.3,205.4 1224.0,207.9 1222.8,210.3 1221.5,212.7 1220.2,215.1 1219.0,217.4 1217.7,219.7 1216.4,221.9 1215.2,224.1 1213.9,226.3 1212.6,228.5 1211.4,230.6 1210.1,232.6 1208.9,234.7 1207.6,236.6 1206.3,238.6 1205.1,240.5 1203.8,242.4 1202.5,244.2 1201.3,246.0 1200.0,247.8 1198.7,249.5 1197.5,251.1 1196.2,252.8 1195.0,254.4 1193.7,255.9 1192.4,257.4 1191.2,258.9 1189.9,260.3 1188.6,261.7 1187.4,263.0 1186.1,264.3 1184.8,265.5 1183.6,266.7 1182.3,267.8 1181.1,268.9 1179.8,269.9 1178.5,270.9 1177.3,271.8 1176.0,272.6 1174.7,273.4 1173.5,274.1 1172.2,274.8 1171.0,275.4 1169.7,275.9 1168.4,276.4 1167.2,276.8 1165.9,277.2 1164.6,277.5 1163.4,277.7 1162.1,277.9 1160.8,278.0 1159.6,278.1 1158.3,278.2 1157.1,278.3 1155.8,278.3 1154.5,278.3 1153.3,278.4 1152.0,278.4 1150.7,278.4 1149.5,278.4 1148.2,278.4 1146.9,278.4 1145.7,278.4 1144.4,278.4 1143.2,278.4 1141.9,278.4" fill="#ff0000" stroke="#ff0000" stroke-width="1.1"/><polyline points="1141.9,278.2 1143.2,278.2 1144.4,278.2 1145.7,278.2 1146.9,278.1 1148.2,278.1 1149.5,278.0 1150.7,278.0 1152.0,277.9 1153.3,277.9 1154.5,277.8 1155.8,277.7 1157.1,277.7 1158.3,277.6 1159.6,277.5 1160.8,277.3 1162.1,277.2 1163.4,277.1 1164.6,276.9 1165.9,276.7 1167.2,276.5 1168.4,276.3 1169.7,276.1 1171.0,275.9 1172.2,275.6 1173.5,275.3 1174.7,275.0 1176.0,274.6 1177.3,274.2 1178.5,273.8 1179.8,273.4 1181.1,273.0 1182.3,272.5 1183.6,272.0 1184.8,271.5 1186.1,270.9 1187.4,270.3 1188.6,269.7 1189.9,269.1 1191.2,268.4 1192.4,267.7 1193.7,267.0 1195.0,266.3 1196.2,265.6 1197.5,264.8 1198.7,264.0 1200.0,263.2 1201.3,262.4 1202.5,261.6 1203.8,260.7 1205.1,259.9 1206.3,259.0 1207.6,258.1 1208.9,257.2 1210.1,256.3 1211.4,255.4 1212.6,254.5 1213.9,253.5 1215.2,252.6 1216.4,251.7 1217.7,250.7 1219.0,249.7 1220.2,248.8 1221.5,247.8 1222.8,246.8 1224.0,245.8 1225.3,244.8 1226.5,243.8 1227.8,242.8 1229.1,241.8 1230.3,240.7 1231.6,239.7 1232.9,238.7 1234.1,237.7 1235.4,236.6 1236.6,235.6 1237.9,234.5 1239.2,233.5 1240.4,232.4 1241.7,231.4 1243.0,230.3 1244.2,229.2 1245.5,228.2 1246.8,227.1 1248.0,226.0 1249.3,225.0 1250.5,223.9 1251.8,222.8 1253.1,221.7 1254.3,220.6 1255.6,219.5" stroke="#ffff00" stroke-width="1.2"/><polyline points="1141.9,278.4 1143.2,278.4 1144.4,278.3 1145.7,278.3 1146.9,278.3 1148.2,278.3 1149.5,278.3 1150.7,278.3 1152.0,278.2 1153.3,278.2 1154.5,278.2 1155.8,278.1 1157.1,278.1 1158.3,278.0 1159.6,277.9 1160.8,277.8 1162.1,277.7 1163.4,277.6 1164.6,277.5 1165.9,277.3 1167.2,277.1 1168.4,276.9 1169.7,276.7 1171.0,276.4 1172.2,276.1 1173.5,275.7 1174.7,275.3 1176.0,274.9 1177.3,274.5 1178.5,273.9 1179.8,273.4 1181.1,272.8 1182.3,272.2 1183.6,271.5 1184.8,270.8 1186.1,270.0 1187.4,269.2 1188.6,268.4 1189.9,267.6 1191.2,266.7 1192.4,265.8 1193.7,264.8 1195.0,263.8 1196.2,262.8 1197.5,261.8 1198.7,260.7 1200.0,259.7 1201.3,258.6 1202.5,257.5 1203.8,256.3 1205.1,255.2 1206.3,254.0 1207.6,252.8 1208.9,251.6 1210.1,250.4 1211.4,249.2 1212.6,247.9 1213.9,246.7 1215.2,245.4 1216.4,244.1 1217.7,242.8 1219.0,241.5 1220.2,240.2 1221.5,238.8 1222.8,237.5 1224.0,236.1 1225.3,234.8 1226.5,233.4 1227.8,232.0 1229.1,230.6 1230.3,229.2 1231.6,227.8 1232.9,226.4 1234.1,224.9 1235.4,223.5 1236.6,222.0 1237.9,220.6 1239.2,219.1 1240.4,217.6 1241.7,216.1 1243.0,214.6 1244.2,213.1 1245.5,211.6 1246.8,210.1 1248.0,208.6 1249.3,207.0 1250.5,205.5 1251.8,203.9 1253.1,202.4 1254.3,200.8 1255.6,199.2" stroke="#ff0000" stroke-width="1.1"/><polyline points="1141.9,278.4 1143.2,278.4 1144.4,278.4 1145.7,278.4 1146.9,278.4 1148.2,278.4 1149.5,278.4 1150.7,278.4 1152.0,278.4 1153.3,278.4 1154.5,278.4 1155.8,278.4 1157.1,278.3 1158.3,278.3 1159.6,278.3 1160.8,278.3 1162.1,278.3 1163.4,278.2 1164.6,278.2 1165.9,278.1 1167.2,278.0 1168.4,277.9 1169.7,277.8 1171.0,277.7 1172.2,277.5 1173.5,277.3 1174.7,277.1 1176.0,276.8 1177.3,276.5 1178.5,276.1 1179.8,275.7 1181.1,275.2 1182.3,274.7 1183.6,274.1 1184.8,273.5 1186.1,272.8 1187.4,272.1 1188.6,271.3 1189.9,270.5 1191.2,269.6 1192.4,268.7 1193.7,267.7 1195.0,266.7 1196.2,265.7 1197.5,264.6 1198.7,263.5 1200.0,262.3 1201.3,261.1 1202.5,259.9 1203.8,258.6 1205.1,257.4 1206.3,256.0 1207.6,254.7 1208.9,253.3 1210.1,251.9 1211.4,250.5 1212.6,249.1 1213.9,247.6 1215.2,246.1 1216.4,244.6 1217.7,243.1 1219.0,241.5 1220.2,239.9 1221.5,238.3 1222.8,236.7 1224.0,235.1 1225.3,233.4 1226.5,231.7 1227.8,230.0 1229.1,228.3 1230.3,226.6 1231.6,224.8 1232.9,223.0 1234.1,221.2 1235.4,219.4 1236.6,217.6 1237.9,215.8 1239.2,213.9 1240.4,212.0 1241.7,210.1 1243.0,208.2 1244.2,206.3 1245.5,204.3 1246.8,202.4 1248.0,200.4 1249.3,198.4 1250.5,196.4 1251.8,194.4 1253.1,192.3 1254.3,190.3 1255.6,188.2" stroke="#ffff00" stroke-width="1.1"/><polyline points="1141.9,278.4 1143.2,278.4 1144.4,278.4 1145.7,278.4 1146.9,278.4 1148.2,278.4 1149.5,278.4 1150.7,278.4 1152.0,278.4 1153.3,278.4 1154.5,278.4 1155.8,278.4 1157.1,278.4 1158.3,278.4 1159.6,278.4 1160.8,278.4 1162.1,278.4 1163.4,278.4 1164.6,278.4 1165.9,278.4 1167.2,278.4 1168.4,278.4 1169.7,278.4 1171.0,278.3 1172.2,278.3 1173.5,278.3 1174.7,278.2 1176.0,278.2 1177.3,278.1 1178.5,277.9 1179.8,277.8 1181.1,277.6 1182.3,277.3 1183.6,277.0 1184.8,276.6 1186.1,276.1 1187.4,275.6 1188.6,275.0 1189.9,274.4 1191.2,273.7 1192.4,272.9 1193.7,272.0 1195.0,271.1 1196.2,270.2 1197.5,269.1 1198.7,268.0 1200.0,266.9 1201.3,265.7 1202.5,264.5 1203.8,263.2 1205.1,261.9 1206.3,260.5 1207.6,259.1 1208.9,257.6 1210.1,256.1 1211.4,254.5 1212.6,252.9 1213.9,251.2 1215.2,249.5 1216.4,247.8 1217.7,246.0 1219.0,244.2 1220.2,242.3 1221.5,240.4 1222.8,238.5 1224.0,236.5 1225.3,234.4 1226.5,232.4 1227.8,230.3 1229.1,228.1 1230.3,226.0 1231.6,223.7 1232.9,221.5 1234.1,219.2 1235.4,216.8 1236.6,214.5 1237.9,212.1 1239.2,209.6 1240.4,207.2 1241.7,204.6 1243.0,202.1 1244.2,199.5 1245.5,196.9 1246.8,194.2 1248.0,191.5 1249.3,188.8 1250.5,186.1 1251.8,183.3 1253.1,180.4 1254.3,177.6 1255.6,174.7" stroke="#ffff00" stroke-width="1"/><polygon points="1141.9,278.4 1143.2,278.4 1144.4,278.4 1145.7,278.4 1146.9,278.4 1148.2,278.4 1149.5,278.4 1150.7,278.4 1152.0,278.4 1153.3,278.4 1154.5,278.4 1155.8,278.4 1157.1,278.4 1158.3,278.4 1159.6,278.4 1160.8,278.4 1162.1,278.4 1163.4,278.4 1164.6,278.4 1165.9,278.4 1167.2,278.4 1168.4,278.4 1169.7,278.4 1171.0,278.3 1172.2,278.3 1173.5,278.3 1174.7,278.2 1176.0,278.1 1177.3,278.0 1178.5,277.9 1179.8,277.7 1181.1,277.4 1182.3,277.1 1183.6,276.8 1184.8,276.3 1186.1,275.8 1187.4,275.3 1188.6,274.6 1189.9,273.9 1191.2,273.1 1192.4,272.3 1193.7,271.4 1195.0,270.4 1196.2,269.4 1197.5,268.3 1198.7,267.2 1200.0,266.0 1201.3,264.8 1202.5,263.5 1203.8,262.1 1205.1,260.7 1206.3,259.3 1207.6,257.8 1208.9,256.2 1210.1,254.6 1211.4,253.0 1212.6,251.3 1213.9,249.6 1215.2,247.8 1216.4,246.0 1217.7,244.1 1219.0,242.2 1220.2,240.3 1221.5,238.3 1222.8,236.3 1224.0,234.2 1225.3,232.1 1226.5,229.9 1227.8,227.7 1229.1,225.5 1230.3,223.2 1231.6,220.9 1232.9,218.6 1234.1,216.2 1235.4,213.8 1236.6,211.3 1237.9,208.8 1239.2,206.3 1240.4,203.7 1241.7,201.1 1243.0,198.5 1244.2,195.8 1245.5,193.1 1246.8,190.3 1248.0,187.5 1249.3,184.7 1250.5,181.8 1251.8,178.9 1253.1,176.0 1254.3,173.0 1255.6,170.0 1255.6,156.0 1254.3,158.9 1253.1,161.9 1251.8,164.8 1250.5,167.7 1249.3,170.5 1248.0,173.3 1246.8,176.1 1245.5,178.9 1244.2,181.6 1243.0,184.3 1241.7,187.0 1240.4,189.6 1239.2,192.2 1237.9,194.8 1236.6,197.3 1235.4,199.8 1234.1,202.3 1232.9,204.7 1231.6,207.1 1230.3,209.5 1229.1,211.8 1227.8,214.1 1226.5,216.4 1225.3,218.6 1224.0,220.8 1222.8,223.0 1221.5,225.1 1220.2,227.2 1219.0,229.3 1217.7,231.3 1216.4,233.3 1215.2,235.3 1213.9,237.2 1212.6,239.1 1211.4,240.9 1210.1,242.8 1208.9,244.5 1207.6,246.3 1206.3,248.0 1205.1,249.6 1203.8,251.3 1202.5,252.8 1201.3,254.4 1200.0,255.9 1198.7,257.4 1197.5,258.8 1196.2,260.2 1195.0,261.5 1193.7,262.8 1192.4,264.0 1191.2,265.2 1189.9,266.4 1188.6,267.5 1187.4,268.6 1186.1,269.6 1184.8,270.5 1183.6,271.5 1182.3,272.3 1181.1,273.1 1179.8,273.8 1178.5,274.5 1177.3,275.1 1176.0,275.7 1174.7,276.2 1173.5,276.6 1172.2,277.0 1171.0,277.3 1169.7,277.6 1168.4,277.8 1167.2,277.9 1165.9,278.1 1164.6,278.2 1163.4,278.2 1162.1,278.3 1160.8,278.3 1159.6,278.3 1158.3,278.4 1157.1,278.4 1155.8,278.4 1154.5,278.4 1153.3,278.4 1152.0,278.4 1150.7,278.4 1149.5,278.4 1148.2,278.4 1146.9,278.4 1145.7,278.4 1144.4,278.4 1143.2,278.4 1141.9,278.4" fill="#ffff00" stroke="#ffff00" stroke-width="1.1"/><polyline points="1141.9,278.4 1143.2,278.4 1144.4,278.4 1145.7,278.4 1146.9,278.4 1148.2,278.4 1149.5,278.4 1150.7,278.4 1152.0,278.4 1153.3,278.4 1154.5,278.4 1155.8,278.4 1157.1,278.4 1158.3,278.4 1159.6,278.4 1160.8,278.4 1162.1,278.4 1163.4,278.4 1164.6,278.4 1165.9,278.4 1167.2,278.4 1168.4,278.3 1169.7,278.3 1171.0,278.3 1172.2,278.2 1173.5,278.2 1174.7,278.1 1176.0,277.9 1177.3,277.8 1178.5,277.6 1179.8,277.3 1181.1,277.0 1182.3,276.6 1183.6,276.1 1184.8,275.6 1186.1,275.0 1187.4,274.4 1188.6,273.6 1189.9,272.9 1191.2,272.0 1192.4,271.1 1193.7,270.1 1195.0,269.1 1196.2,268.0 1197.5,266.8 1198.7,265.6 1200.0,264.4 1201.3,263.1 1202.5,261.7 1203.8,260.3 1205.1,258.9 1206.3,257.4 1207.6,255.8 1208.9,254.2 1210.1,252.6 1211.4,250.9 1212.6,249.2 1213.9,247.4 1215.2,245.6 1216.4,243.8 1217.7,241.9 1219.0,239.9 1220.2,238.0 1221.5,235.9 1222.8,233.9 1224.0,231.8 1225.3,229.7 1226.5,227.5 1227.8,225.3 1229.1,223.0 1230.3,220.7 1231.6,218.4 1232.9,216.0 1234.1,213.6 1235.4,211.2 1236.6,208.7 1237.9,206.2 1239.2,203.6 1240.4,201.0 1241.7,198.4 1243.0,195.7 1244.2,193.0 1245.5,190.3 1246.8,187.5 1248.0,184.7 1249.3,181.9 1250.5,179.0 1251.8,176.1 1253.1,173.2 1254.3,170.2 1255.6,167.2" stroke="#705000" stroke-width="0.3"/><polyline points="1141.9,278.4 1143.2,278.4 1144.4,278.4 1145.7,278.4 1146.9,278.4 1148.2,278.4 1149.5,278.4 1150.7,278.4 1152.0,278.4 1153.3,278.4 1154.5,278.4 1155.8,278.4 1157.1,278.4 1158.3,278.4 1159.6,278.4 1160.8,278.4 1162.1,278.4 1163.4,278.4 1164.6,278.4 1165.9,278.3 1167.2,278.3 1168.4,278.3 1169.7,278.2 1171.0,278.2 1172.2,278.1 1173.5,277.9 1174.7,277.8 1176.0,277.5 1177.3,277.3 1178.5,276.9 1179.8,276.5 1181.1,276.1 1182.3,275.6 1183.6,275.0 1184.8,274.3 1186.1,273.6 1187.4,272.8 1188.6,272.0 1189.9,271.1 1191.2,270.1 1192.4,269.1 1193.7,268.0 1195.0,266.9 1196.2,265.7 1197.5,264.5 1198.7,263.2 1200.0,261.9 1201.3,260.5 1202.5,259.1 1203.8,257.6 1205.1,256.1 1206.3,254.6 1207.6,253.0 1208.9,251.3 1210.1,249.7 1211.4,247.9 1212.6,246.2 1213.9,244.4 1215.2,242.5 1216.4,240.6 1217.7,238.7 1219.0,236.8 1220.2,234.7 1221.5,232.7 1222.8,230.6 1224.0,228.5 1225.3,226.4 1226.5,224.2 1227.8,221.9 1229.1,219.7 1230.3,217.4 1231.6,215.0 1232.9,212.6 1234.1,210.2 1235.4,207.8 1236.6,205.3 1237.9,202.8 1239.2,200.2 1240.4,197.6 1241.7,195.0 1243.0,192.4 1244.2,189.7 1245.5,186.9 1246.8,184.2 1248.0,181.4 1249.3,178.6 1250.5,175.7 1251.8,172.8 1253.1,169.9 1254.3,166.9 1255.6,163.9" stroke="#705000" stroke-width="0.3"/><polyline points="1141.9,278.4 1143.2,278.4 1144.4,278.4 1145.7,278.4 1146.9,278.4 1148.2,278.4 1149.5,278.4 1150.7,278.4 1152.0,278.4 1153.3,278.4 1154.5,278.4 1155.8,278.4 1157.1,278.4 1158.3,278.4 1159.6,278.4 1160.8,278.3 1162.1,278.3 1163.4,278.3 1164.6,278.2 1165.9,278.1 1167.2,278.0 1168.4,277.9 1169.7,277.7 1171.0,277.4 1172.2,277.1 1173.5,276.8 1174.7,276.4 1176.0,275.9 1177.3,275.4 1178.5,274.8 1179.8,274.1 1181.1,273.4 1182.3,272.7 1183.6,271.8 1184.8,270.9 1186.1,270.0 1187.4,269.0 1188.6,268.0 1189.9,266.9 1191.2,265.7 1192.4,264.5 1193.7,263.3 1195.0,262.0 1196.2,260.7 1197.5,259.3 1198.7,257.9 1200.0,256.5 1201.3,255.0 1202.5,253.5 1203.8,251.9 1205.1,250.3 1206.3,248.6 1207.6,246.9 1208.9,245.2 1210.1,243.4 1211.4,241.6 1212.6,239.8 1213.9,237.9 1215.2,236.0 1216.4,234.1 1217.7,232.1 1219.0,230.1 1220.2,228.0 1221.5,225.9 1222.8,223.8 1224.0,221.6 1225.3,219.4 1226.5,217.2 1227.8,214.9 1229.1,212.6 1230.3,210.3 1231.6,207.9 1232.9,205.5 1234.1,203.1 1235.4,200.6 1236.6,198.2 1237.9,195.6 1239.2,193.1 1240.4,190.5 1241.7,187.8 1243.0,185.2 1244.2,182.5 1245.5,179.8 1246.8,177.0 1248.0,174.2 1249.3,171.4 1250.5,168.6 1251.8,165.7 1253.1,162.8 1254.3,159.9 1255.6,156.9" stroke="#c03000" stroke-width="0.45"/><polyline points="1141.9,278.4 1143.2,278.4 1144.4,278.4 1145.7,278.4 1146.9,278.4 1148.2,278.4 1149.5,278.4 1150.7,278.4 1152.0,278.4 1153.3,278.4 1154.5,278.4 1155.8,278.4 1157.1,278.4 1158.3,278.3 1159.6,278.3 1160.8,278.3 1162.1,278.2 1163.4,278.2 1164.6,278.1 1165.9,278.0 1167.2,277.8 1168.4,277.6 1169.7,277.3 1171.0,277.0 1172.2,276.7 1173.5,276.2 1174.7,275.7 1176.0,275.2 1177.3,274.6 1178.5,273.9 1179.8,273.2 1181.1,272.4 1182.3,271.5 1183.6,270.6 1184.8,269.6 1186.1,268.6 1187.4,267.6 1188.6,266.5 1189.9,265.3 1191.2,264.1 1192.4,262.8 1193.7,261.5 1195.0,260.2 1196.2,258.8 1197.5,257.4 1198.7,255.9 1200.0,254.4 1201.3,252.9 1202.5,251.3 1203.8,249.7 1205.1,248.0 1206.3,246.3 1207.6,244.6 1208.9,242.8 1210.1,241.0 1211.4,239.1 1212.6,237.2 1213.9,235.3 1215.2,233.3 1216.4,231.3 1217.7,229.3 1219.0,227.2 1220.2,225.1 1221.5,223.0 1222.8,220.8 1224.0,218.6 1225.3,216.3 1226.5,214.1 1227.8,211.7 1229.1,209.4 1230.3,207.0 1231.6,204.6 1232.9,202.2 1234.1,199.7 1235.4,197.2 1236.6,194.6 1237.9,192.1 1239.2,189.4 1240.4,186.8 1241.7,184.1 1243.0,181.4 1244.2,178.7 1245.5,175.9 1246.8,173.1 1248.0,170.3 1249.3,167.5 1250.5,164.6 1251.8,161.6 1253.1,158.7 1254.3,155.7 1255.6,152.7" stroke="#900000" stroke-width="0.35"/></g><rect x="1042.4" y="91.5" width="213.2" height="186.9" fill="none" stroke="#a4a4a4" stroke-width="1"/><path d="M1056.6 91.5v4.6M1056.6 278.4v-4.6M1070.8 91.5v4.6M1070.8 278.4v-4.6M1085.0 91.5v4.6M1085.0 278.4v-4.6M1099.3 91.5v4.6M1099.3 278.4v-4.6M1113.5 91.5v4.6M1113.5 278.4v-4.6M1127.7 91.5v4.6M1127.7 278.4v-4.6M1141.9 91.5v4.6M1141.9 278.4v-4.6M1156.1 91.5v4.6M1156.1 278.4v-4.6M1170.3 91.5v4.6M1170.3 278.4v-4.6M1184.5 91.5v4.6M1184.5 278.4v-4.6M1198.7 91.5v4.6M1198.7 278.4v-4.6M1213.0 91.5v4.6M1213.0 278.4v-4.6M1227.2 91.5v4.6M1227.2 278.4v-4.6M1241.4 91.5v4.6M1241.4 278.4v-4.6M1042.4 100.8h4.6M1042.4 110.2h4.6M1042.4 119.5h4.6M1042.4 128.9h4.6M1042.4 138.2h6M1042.4 147.6h4.6M1042.4 156.9h4.6M1042.4 166.3h4.6M1042.4 175.6h4.6M1042.4 184.9h6M1042.4 194.3h4.6M1042.4 203.6h4.6M1042.4 213.0h4.6M1042.4 222.3h4.6M1042.4 231.7h6M1042.4 241.0h4.6M1042.4 250.4h4.6M1042.4 259.7h4.6M1042.4 269.1h4.6" stroke="#8c8c8c" stroke-width="1"/><path d="M1019.4 147V210.6" stroke="#b8b000" stroke-width="1.2"/><path d="M1019.4 216V278.4" stroke="#c40000" stroke-width="1.2"/><text x="1039.0" y="281.5" text-anchor="end" font-size="10.5" fill="#e2e2e2">0.0</text><text x="1039.0" y="234.8" text-anchor="end" font-size="10.5" fill="#e2e2e2">0.5</text><text x="1039.0" y="188.0" text-anchor="end" font-size="10.5" fill="#e2e2e2">1.0</text><text x="1039.0" y="141.3" text-anchor="end" font-size="10.5" fill="#e2e2e2">1.5</text><text x="1039.0" y="94.6" text-anchor="end" font-size="10.5" fill="#e2e2e2">2.0</text><text x="1041.8" y="291.0" text-anchor="middle" font-size="10.5" fill="#e2e2e2">-0.5</text><text x="1113.7" y="291.0" text-anchor="middle" font-size="10.5" fill="#e2e2e2">0.0</text><text x="1184.7" y="291.0" text-anchor="middle" font-size="10.5" fill="#e2e2e2">0.5</text><text x="1255.8" y="291.0" text-anchor="middle" font-size="10.5" fill="#e2e2e2">1.0</text><text x="1146.4" y="306" text-anchor="middle" font-size="13" fill="#e2e2e2" xml:space="preserve" textLength="45.6" lengthAdjust="spacingAndGlyphs">vg  [E+0]</text><text transform="translate(1011.0,277.6) rotate(-90)" font-size="13" fill="#e2e2e2" textLength="61.6" lengthAdjust="spacingAndGlyphs">myModel_1</text><text transform="translate(1011.0,210.4) rotate(-90)" font-size="13" fill="#e2e2e2" textLength="62.4" lengthAdjust="spacingAndGlyphs">myModel_2</text><text transform="translate(1015.4,140.6) rotate(-90)" font-size="13" fill="#e2e2e2" textLength="21.6" lengthAdjust="spacingAndGlyphs">[E-3]</text><text x="1005.6" y="78" font-size="13" fill="#ececec" textLength="257.8" lengthAdjust="spacing">Plot QA_Result/DC_IV_D1_Tnom/idvg/idvg</text><rect x="1273.7" y="66.5" width="20.6" height="20.8" fill="none" stroke="#9a9a9a"/><path d="M1273.7 73.4h14.4v13.9M1273.7 81h7.3v6.3" fill="none" stroke="#9a9a9a"/><rect x="1273.7" y="92.8" width="20.6" height="20.4" fill="none" stroke="#9a9a9a"/><rect x="1273.2" y="113.2" width="21.6" height="21.6" fill="#ffa400"/><text x="1284.2" y="106" text-anchor="middle" font-size="10.8" fill="#f0f0f0">PO</text><text x="1284.0" y="126.8" text-anchor="middle" font-size="10.8" fill="#fff">A</text><rect x="1273.7" y="273.5" width="20.6" height="20.9" fill="none" stroke="#9a9a9a"/><rect x="1273.7" y="294.4" width="20.6" height="21.2" fill="none" stroke="#9a9a9a"/><text x="1284.0" y="287.2" text-anchor="middle" font-size="10.6" fill="#f0f0f0">X</text><text x="1284.0" y="308.2" text-anchor="middle" font-size="10.6" fill="#f0f0f0">Y</text><path d="M1413.7 91.5V278.4" stroke="#a0a0a0" stroke-width="1"/><path d="M1486.7 91.5V278.4" stroke="#31566c" stroke-width="1" stroke-dasharray="2.2 1.3"/><path d="M1340.6 231.7H1559.8" stroke="#31566c" stroke-width="1" stroke-dasharray="2.2 1.3"/><path d="M1340.6 184.9H1559.8" stroke="#31566c" stroke-width="1" stroke-dasharray="2.2 1.3"/><path d="M1340.6 138.2H1559.8" stroke="#31566c" stroke-width="1" stroke-dasharray="2.2 1.3"/><clipPath id="cp1340"><rect x="1340.6" y="90.5" width="219.6" height="188.5"/></clipPath><g clip-path="url(#cp1340)" fill="none" stroke-linejoin="round"><polyline points="1442.9,278.4 1444.2,278.4 1445.5,278.4 1446.8,278.4 1448.1,278.4 1449.4,278.4 1450.7,278.4 1452.0,278.4 1453.3,278.4 1454.6,278.4 1455.9,278.3 1457.2,278.3 1458.5,278.3 1459.8,278.3 1461.1,278.2 1462.4,278.2 1463.7,278.1 1465.0,278.0 1466.3,277.9 1467.6,277.7 1468.9,277.5 1470.2,277.1 1471.5,276.7 1472.8,276.2 1474.1,275.5 1475.4,274.5 1476.7,273.4 1478.0,271.9 1479.3,270.2 1480.6,268.0 1481.9,265.5 1483.2,262.6 1484.5,259.4 1485.8,255.9 1487.1,252.2 1488.4,248.4 1489.7,244.6 1491.0,240.9 1492.3,237.4 1493.6,234.1 1494.9,231.1 1496.2,228.4 1497.4,226.0 1498.7,223.9 1500.0,222.0 1501.3,220.4 1502.6,219.1 1503.9,218.0 1505.2,217.0 1506.5,216.2 1507.8,215.6 1509.1,215.0 1510.4,214.6 1511.7,214.3 1513.0,214.1 1514.3,213.9 1515.6,213.8 1516.9,213.7 1518.2,213.7 1519.5,213.8 1520.8,213.8 1522.1,213.9 1523.4,214.0 1524.7,214.2 1526.0,214.4 1527.3,214.6 1528.6,214.8 1529.9,215.0 1531.2,215.2 1532.5,215.5 1533.8,215.8 1535.1,216.0 1536.4,216.3 1537.7,216.6 1539.0,216.9 1540.3,217.2 1541.6,217.5 1542.9,217.8 1544.2,218.2 1545.5,218.5 1546.8,218.8 1548.1,219.2 1549.4,219.5 1550.7,219.8 1552.0,220.2 1553.3,220.5 1554.6,220.9 1555.9,221.2 1557.2,221.6 1558.5,222.0 1559.8,222.3" stroke="#ffff00" stroke-width="1.2"/><polyline points="1442.9,278.4 1444.2,278.4 1445.5,278.4 1446.8,278.4 1448.1,278.4 1449.4,278.4 1450.7,278.4 1452.0,278.3 1453.3,278.3 1454.6,278.3 1455.9,278.3 1457.2,278.2 1458.5,278.2 1459.8,278.1 1461.1,278.0 1462.4,277.8 1463.7,277.6 1465.0,277.3 1466.3,277.0 1467.6,276.5 1468.9,275.9 1470.2,275.1 1471.5,274.1 1472.8,272.8 1474.1,271.2 1475.4,269.3 1476.7,266.9 1478.0,264.2 1479.3,261.1 1480.6,257.7 1481.9,254.0 1483.2,250.1 1484.5,246.1 1485.8,242.0 1487.1,237.9 1488.4,233.9 1489.7,230.0 1491.0,226.3 1492.3,222.8 1493.6,219.5 1494.9,216.5 1496.2,213.7 1497.4,211.1 1498.7,208.8 1500.0,206.7 1501.3,204.8 1502.6,203.2 1503.9,201.7 1505.2,200.4 1506.5,199.3 1507.8,198.3 1509.1,197.5 1510.4,196.8 1511.7,196.2 1513.0,195.8 1514.3,195.4 1515.6,195.1 1516.9,194.9 1518.2,194.8 1519.5,194.8 1520.8,194.8 1522.1,194.9 1523.4,195.0 1524.7,195.2 1526.0,195.4 1527.3,195.6 1528.6,195.9 1529.9,196.3 1531.2,196.6 1532.5,197.0 1533.8,197.4 1535.1,197.8 1536.4,198.3 1537.7,198.8 1539.0,199.3 1540.3,199.8 1541.6,200.3 1542.9,200.8 1544.2,201.4 1545.5,201.9 1546.8,202.5 1548.1,203.1 1549.4,203.7 1550.7,204.3 1552.0,204.9 1553.3,205.6 1554.6,206.2 1555.9,206.8 1557.2,207.5 1558.5,208.1 1559.8,208.8" stroke="#ff0000" stroke-width="1.2"/><polyline points="1442.9,278.4 1444.2,278.4 1445.5,278.4 1446.8,278.4 1448.1,278.4 1449.4,278.4 1450.7,278.4 1452.0,278.4 1453.3,278.4 1454.6,278.3 1455.9,278.3 1457.2,278.3 1458.5,278.3 1459.8,278.2 1461.1,278.1 1462.4,278.0 1463.7,277.9 1465.0,277.8 1466.3,277.5 1467.6,277.3 1468.9,276.9 1470.2,276.4 1471.5,275.7 1472.8,274.9 1474.1,273.8 1475.4,272.5 1476.7,270.8 1478.0,268.8 1479.3,266.4 1480.6,263.6 1481.9,260.5 1483.2,257.0 1484.5,253.3 1485.8,249.4 1487.1,245.3 1488.4,241.1 1489.7,236.9 1491.0,232.8 1492.3,228.6 1493.6,224.6 1494.9,220.8 1496.2,217.0 1497.4,213.4 1498.7,210.0 1500.0,206.8 1501.3,203.8 1502.6,201.0 1503.9,198.4 1505.2,195.9 1506.5,193.7 1507.8,191.6 1509.1,189.7 1510.4,188.0 1511.7,186.4 1513.0,184.9 1514.3,183.6 1515.6,182.4 1516.9,181.3 1518.2,180.3 1519.5,179.4 1520.8,178.6 1522.1,177.8 1523.4,177.2 1524.7,176.5 1526.0,176.0 1527.3,175.5 1528.6,175.0 1529.9,174.6 1531.2,174.2 1532.5,173.8 1533.8,173.5 1535.1,173.2 1536.4,172.9 1537.7,172.6 1539.0,172.4 1540.3,172.2 1541.6,172.0 1542.9,171.8 1544.2,171.6 1545.5,171.5 1546.8,171.3 1548.1,171.2 1549.4,171.1 1550.7,170.9 1552.0,170.8 1553.3,170.7 1554.6,170.6 1555.9,170.6 1557.2,170.5 1558.5,170.4 1559.8,170.3" stroke="#ffff00" stroke-width="1.2"/><polyline points="1442.9,278.4 1444.2,278.4 1445.5,278.4 1446.8,278.4 1448.1,278.4 1449.4,278.4 1450.7,278.4 1452.0,278.4 1453.3,278.4 1454.6,278.3 1455.9,278.3 1457.2,278.3 1458.5,278.3 1459.8,278.2 1461.1,278.2 1462.4,278.1 1463.7,278.0 1465.0,277.9 1466.3,277.7 1467.6,277.4 1468.9,277.1 1470.2,276.7 1471.5,276.1 1472.8,275.4 1474.1,274.5 1475.4,273.3 1476.7,271.8 1478.0,270.1 1479.3,267.9 1480.6,265.4 1481.9,262.5 1483.2,259.3 1484.5,255.9 1485.8,252.2 1487.1,248.3 1488.4,244.3 1489.7,240.4 1491.0,236.4 1492.3,232.4 1493.6,228.6 1494.9,224.8 1496.2,221.1 1497.4,217.6 1498.7,214.1 1500.0,210.8 1501.3,207.6 1502.6,204.6 1503.9,201.6 1505.2,198.8 1506.5,196.1 1507.8,193.5 1509.1,191.0 1510.4,188.6 1511.7,186.3 1513.0,184.1 1514.3,182.0 1515.6,180.0 1516.9,178.1 1518.2,176.2 1519.5,174.4 1520.8,172.7 1522.1,171.1 1523.4,169.5 1524.7,168.0 1526.0,166.6 1527.3,165.2 1528.6,163.8 1529.9,162.6 1531.2,161.4 1532.5,160.2 1533.8,159.1 1535.1,158.0 1536.4,157.0 1537.7,156.0 1539.0,155.0 1540.3,154.1 1541.6,153.3 1542.9,152.4 1544.2,151.6 1545.5,150.9 1546.8,150.1 1548.1,149.4 1549.4,148.8 1550.7,148.1 1552.0,147.5 1553.3,146.9 1554.6,146.3 1555.9,145.8 1557.2,145.3 1558.5,144.8 1559.8,144.3" stroke="#ffff00" stroke-width="1.1"/><polyline points="1442.9,278.4 1444.2,278.4 1445.5,278.4 1446.8,278.4 1448.1,278.4 1449.4,278.4 1450.7,278.3 1452.0,278.3 1453.3,278.3 1454.6,278.3 1455.9,278.2 1457.2,278.1 1458.5,278.1 1459.8,277.9 1461.1,277.8 1462.4,277.6 1463.7,277.3 1465.0,276.9 1466.3,276.4 1467.6,275.8 1468.9,275.0 1470.2,273.9 1471.5,272.6 1472.8,270.9 1474.1,268.9 1475.4,266.5 1476.7,263.7 1478.0,260.5 1479.3,257.0 1480.6,253.2 1481.9,249.2 1483.2,245.0 1484.5,240.7 1485.8,236.3 1487.1,232.0 1488.4,227.6 1489.7,223.4 1491.0,219.2 1492.3,215.1 1493.6,211.2 1494.9,207.3 1496.2,203.6 1497.4,200.0 1498.7,196.5 1500.0,193.2 1501.3,190.0 1502.6,186.9 1503.9,184.0 1505.2,181.2 1506.5,178.5 1507.8,176.0 1509.1,173.7 1510.4,171.4 1511.7,169.3 1513.0,167.4 1514.3,165.6 1515.6,163.9 1516.9,162.4 1518.2,160.9 1519.5,159.6 1520.8,158.4 1522.1,157.4 1523.4,156.4 1524.7,155.5 1526.0,154.6 1527.3,153.9 1528.6,153.2 1529.9,152.6 1531.2,152.0 1532.5,151.5 1533.8,151.0 1535.1,150.6 1536.4,150.2 1537.7,149.9 1539.0,149.6 1540.3,149.3 1541.6,149.0 1542.9,148.8 1544.2,148.5 1545.5,148.3 1546.8,148.1 1548.1,148.0 1549.4,147.8 1550.7,147.7 1552.0,147.5 1553.3,147.4 1554.6,147.3 1555.9,147.2 1557.2,147.1 1558.5,147.0 1559.8,146.9" stroke="#ff0000" stroke-width="1.1"/><polyline points="1442.9,278.4 1444.2,278.4 1445.5,278.4 1446.8,278.4 1448.1,278.4 1449.4,278.4 1450.7,278.4 1452.0,278.4 1453.3,278.4 1454.6,278.3 1455.9,278.3 1457.2,278.3 1458.5,278.3 1459.8,278.2 1461.1,278.1 1462.4,278.1 1463.7,277.9 1465.0,277.8 1466.3,277.6 1467.6,277.3 1468.9,276.9 1470.2,276.4 1471.5,275.8 1472.8,275.0 1474.1,273.9 1475.4,272.6 1476.7,271.0 1478.0,269.0 1479.3,266.7 1480.6,264.0 1481.9,260.9 1483.2,257.6 1484.5,253.9 1485.8,250.1 1487.1,246.2 1488.4,242.1 1489.7,238.0 1491.0,234.0 1492.3,229.9 1493.6,226.0 1494.9,222.1 1496.2,218.3 1497.4,214.7 1498.7,211.1 1500.0,207.7 1501.3,204.4 1502.6,201.1 1503.9,198.0 1505.2,195.0 1506.5,192.2 1507.8,189.4 1509.1,186.7 1510.4,184.1 1511.7,181.6 1513.0,179.2 1514.3,176.9 1515.6,174.6 1516.9,172.5 1518.2,170.4 1519.5,168.4 1520.8,166.5 1522.1,164.6 1523.4,162.8 1524.7,161.1 1526.0,159.4 1527.3,157.8 1528.6,156.3 1529.9,154.8 1531.2,153.3 1532.5,152.0 1533.8,150.6 1535.1,149.3 1536.4,148.1 1537.7,146.9 1539.0,145.8 1540.3,144.7 1541.6,143.6 1542.9,142.6 1544.2,141.6 1545.5,140.6 1546.8,139.7 1548.1,138.8 1549.4,138.0 1550.7,137.1 1552.0,136.3 1553.3,135.6 1554.6,134.8 1555.9,134.1 1557.2,133.4 1558.5,132.8 1559.8,132.2" stroke="#ffff00" stroke-width="1.1"/><polygon points="1442.9,278.4 1444.2,278.4 1445.5,278.4 1446.8,278.4 1448.1,278.4 1449.4,278.3 1450.7,278.3 1452.0,278.3 1453.3,278.3 1454.6,278.2 1455.9,278.2 1457.2,278.1 1458.5,278.0 1459.8,277.8 1461.1,277.7 1462.4,277.4 1463.7,277.1 1465.0,276.6 1466.3,276.0 1467.6,275.3 1468.9,274.3 1470.2,273.1 1471.5,271.6 1472.8,269.7 1474.1,267.5 1475.4,264.8 1476.7,261.8 1478.0,258.3 1479.3,254.6 1480.6,250.6 1481.9,246.4 1483.2,242.1 1484.5,237.7 1485.8,233.3 1487.1,228.9 1488.4,224.6 1489.7,220.3 1491.0,216.2 1492.3,212.1 1493.6,208.1 1494.9,204.3 1496.2,200.6 1497.4,197.0 1498.7,193.5 1500.0,190.1 1501.3,186.9 1502.6,183.7 1503.9,180.7 1505.2,177.8 1506.5,174.9 1507.8,172.2 1509.1,169.6 1510.4,167.0 1511.7,164.6 1513.0,162.2 1514.3,159.9 1515.6,157.7 1516.9,155.5 1518.2,153.5 1519.5,151.5 1520.8,149.6 1522.1,147.7 1523.4,146.0 1524.7,144.2 1526.0,142.6 1527.3,141.0 1528.6,139.4 1529.9,137.9 1531.2,136.5 1532.5,135.1 1533.8,133.7 1535.1,132.5 1536.4,131.2 1537.7,130.0 1539.0,128.8 1540.3,127.7 1541.6,126.6 1542.9,125.6 1544.2,124.6 1545.5,123.6 1546.8,122.6 1548.1,121.7 1549.4,120.9 1550.7,120.0 1552.0,119.2 1553.3,118.4 1554.6,117.6 1555.9,116.9 1557.2,116.2 1558.5,115.5 1559.8,114.9 1559.8,103.6 1558.5,104.3 1557.2,104.9 1555.9,105.6 1554.6,106.3 1553.3,107.0 1552.0,107.8 1550.7,108.6 1549.4,109.4 1548.1,110.2 1546.8,111.1 1545.5,112.0 1544.2,112.9 1542.9,113.9 1541.6,114.9 1540.3,115.9 1539.0,117.0 1537.7,118.1 1536.4,119.3 1535.1,120.5 1533.8,121.7 1532.5,123.0 1531.2,124.3 1529.9,125.7 1528.6,127.1 1527.3,128.6 1526.0,130.2 1524.7,131.7 1523.4,133.4 1522.1,135.1 1520.8,136.9 1519.5,138.7 1518.2,140.6 1516.9,142.6 1515.6,144.6 1514.3,146.7 1513.0,148.9 1511.7,151.2 1510.4,153.5 1509.1,156.0 1507.8,158.5 1506.5,161.1 1505.2,163.8 1503.9,166.6 1502.6,169.5 1501.3,172.6 1500.0,175.7 1498.7,178.9 1497.4,182.3 1496.2,185.7 1494.9,189.3 1493.6,193.0 1492.3,196.8 1491.0,200.8 1489.7,204.9 1488.4,209.1 1487.1,213.4 1485.8,217.8 1484.5,222.4 1483.2,227.0 1481.9,231.6 1480.6,236.3 1479.3,240.9 1478.0,245.5 1476.7,249.8 1475.4,254.0 1474.1,257.9 1472.8,261.4 1471.5,264.6 1470.2,267.3 1468.9,269.6 1467.6,271.5 1466.3,273.1 1465.0,274.3 1463.7,275.3 1462.4,276.0 1461.1,276.6 1459.8,277.1 1458.5,277.4 1457.2,277.6 1455.9,277.8 1454.6,278.0 1453.3,278.1 1452.0,278.2 1450.7,278.2 1449.4,278.3 1448.1,278.3 1446.8,278.3 1445.5,278.3 1444.2,278.4 1442.9,278.4" fill="#ff0000" stroke="#ff0000" stroke-width="1.1"/><polyline points="1442.9,278.4 1444.2,278.4 1445.5,278.4 1446.8,278.4 1448.1,278.4 1449.4,278.4 1450.7,278.3 1452.0,278.3 1453.3,278.3 1454.6,278.3 1455.9,278.2 1457.2,278.1 1458.5,278.1 1459.8,277.9 1461.1,277.8 1462.4,277.6 1463.7,277.3 1465.0,276.9 1466.3,276.5 1467.6,275.8 1468.9,275.0 1470.2,274.0 1471.5,272.7 1472.8,271.1 1474.1,269.1 1475.4,266.7 1476.7,264.0 1478.0,260.9 1479.3,257.4 1480.6,253.7 1481.9,249.7 1483.2,245.5 1484.5,241.3 1485.8,236.9 1487.1,232.6 1488.4,228.3 1489.7,224.0 1491.0,219.8 1492.3,215.7 1493.6,211.7 1494.9,207.8 1496.2,204.0 1497.4,200.3 1498.7,196.8 1500.0,193.3 1501.3,189.9 1502.6,186.7 1503.9,183.5 1505.2,180.5 1506.5,177.5 1507.8,174.7 1509.1,171.9 1510.4,169.2 1511.7,166.6 1513.0,164.1 1514.3,161.7 1515.6,159.3 1516.9,157.1 1518.2,154.9 1519.5,152.7 1520.8,150.7 1522.1,148.7 1523.4,146.8 1524.7,144.9 1526.0,143.1 1527.3,141.3 1528.6,139.6 1529.9,138.0 1531.2,136.4 1532.5,134.9 1533.8,133.4 1535.1,132.0 1536.4,130.6 1537.7,129.3 1539.0,128.0 1540.3,126.7 1541.6,125.5 1542.9,124.3 1544.2,123.2 1545.5,122.1 1546.8,121.0 1548.1,120.0 1549.4,119.0 1550.7,118.0 1552.0,117.1 1553.3,116.2 1554.6,115.3 1555.9,114.4 1557.2,113.6 1558.5,112.8 1559.8,112.1" stroke="#ff0000" stroke-width="0.9"/><polyline points="1442.9,278.4 1444.2,278.4 1445.5,278.4 1446.8,278.4 1448.1,278.4 1449.4,278.4 1450.7,278.4 1452.0,278.3 1453.3,278.3 1454.6,278.3 1455.9,278.2 1457.2,278.2 1458.5,278.1 1459.8,278.0 1461.1,277.9 1462.4,277.7 1463.7,277.5 1465.0,277.2 1466.3,276.8 1467.6,276.3 1468.9,275.6 1470.2,274.8 1471.5,273.7 1472.8,272.3 1474.1,270.6 1475.4,268.5 1476.7,266.1 1478.0,263.3 1479.3,260.1 1480.6,256.7 1481.9,252.9 1483.2,249.0 1484.5,244.9 1485.8,240.8 1487.1,236.5 1488.4,232.3 1489.7,228.2 1491.0,224.0 1492.3,220.0 1493.6,216.0 1494.9,212.2 1496.2,208.4 1497.4,204.7 1498.7,201.2 1500.0,197.7 1501.3,194.4 1502.6,191.1 1503.9,188.0 1505.2,184.9 1506.5,181.9 1507.8,179.1 1509.1,176.3 1510.4,173.6 1511.7,170.9 1513.0,168.4 1514.3,166.0 1515.6,163.6 1516.9,161.3 1518.2,159.0 1519.5,156.9 1520.8,154.8 1522.1,152.7 1523.4,150.8 1524.7,148.9 1526.0,147.0 1527.3,145.2 1528.6,143.5 1529.9,141.8 1531.2,140.2 1532.5,138.6 1533.8,137.1 1535.1,135.6 1536.4,134.2 1537.7,132.8 1539.0,131.5 1540.3,130.2 1541.6,128.9 1542.9,127.7 1544.2,126.5 1545.5,125.3 1546.8,124.2 1548.1,123.2 1549.4,122.1 1550.7,121.1 1552.0,120.1 1553.3,119.2 1554.6,118.3 1555.9,117.4 1557.2,116.5 1558.5,115.7 1559.8,114.9" stroke="#ff0000" stroke-width="0.8"/><polygon points="1442.9,278.4 1444.2,278.4 1445.5,278.4 1446.8,278.4 1448.1,278.4 1449.4,278.4 1450.7,278.4 1452.0,278.4 1453.3,278.4 1454.6,278.4 1455.9,278.3 1457.2,278.3 1458.5,278.3 1459.8,278.3 1461.1,278.2 1462.4,278.1 1463.7,278.1 1465.0,277.9 1466.3,277.8 1467.6,277.6 1468.9,277.3 1470.2,276.9 1471.5,276.5 1472.8,275.8 1474.1,275.0 1475.4,274.0 1476.7,272.7 1478.0,271.1 1479.3,269.2 1480.6,266.8 1481.9,264.1 1483.2,261.1 1484.5,257.7 1485.8,254.0 1487.1,250.1 1488.4,246.1 1489.7,242.0 1491.0,237.8 1492.3,233.6 1493.6,229.5 1494.9,225.4 1496.2,221.4 1497.4,217.5 1498.7,213.7 1500.0,210.0 1501.3,206.5 1502.6,203.0 1503.9,199.6 1505.2,196.4 1506.5,193.3 1507.8,190.2 1509.1,187.3 1510.4,184.5 1511.7,181.7 1513.0,179.1 1514.3,176.6 1515.6,174.1 1516.9,171.8 1518.2,169.5 1519.5,167.3 1520.8,165.1 1522.1,163.1 1523.4,161.1 1524.7,159.2 1526.0,157.3 1527.3,155.5 1528.6,153.8 1529.9,152.2 1531.2,150.6 1532.5,149.0 1533.8,147.5 1535.1,146.1 1536.4,144.7 1537.7,143.4 1539.0,142.1 1540.3,140.8 1541.6,139.6 1542.9,138.4 1544.2,137.3 1545.5,136.2 1546.8,135.2 1548.1,134.2 1549.4,133.2 1550.7,132.3 1552.0,131.4 1553.3,130.5 1554.6,129.6 1555.9,128.8 1557.2,128.0 1558.5,127.3 1559.8,126.5 1559.8,118.1 1558.5,118.8 1557.2,119.5 1555.9,120.2 1554.6,120.9 1553.3,121.7 1552.0,122.5 1550.7,123.3 1549.4,124.1 1548.1,125.0 1546.8,125.9 1545.5,126.9 1544.2,127.9 1542.9,128.9 1541.6,129.9 1540.3,131.0 1539.0,132.1 1537.7,133.3 1536.4,134.5 1535.1,135.8 1533.8,137.1 1532.5,138.4 1531.2,139.8 1529.9,141.2 1528.6,142.7 1527.3,144.3 1526.0,145.9 1524.7,147.6 1523.4,149.3 1522.1,151.1 1520.8,152.9 1519.5,154.9 1518.2,156.8 1516.9,158.9 1515.6,161.0 1514.3,163.3 1513.0,165.5 1511.7,167.9 1510.4,170.4 1509.1,172.9 1507.8,175.6 1506.5,178.3 1505.2,181.2 1503.9,184.1 1502.6,187.1 1501.3,190.3 1500.0,193.5 1498.7,196.9 1497.4,200.4 1496.2,204.0 1494.9,207.7 1493.6,211.6 1492.3,215.5 1491.0,219.6 1489.7,223.7 1488.4,227.9 1487.1,232.2 1485.8,236.6 1484.5,240.9 1483.2,245.2 1481.9,249.3 1480.6,253.4 1479.3,257.1 1478.0,260.6 1476.7,263.8 1475.4,266.6 1474.1,268.9 1472.8,270.9 1471.5,272.6 1470.2,273.9 1468.9,275.0 1467.6,275.8 1466.3,276.4 1465.0,276.9 1463.7,277.3 1462.4,277.6 1461.1,277.8 1459.8,277.9 1458.5,278.1 1457.2,278.1 1455.9,278.2 1454.6,278.3 1453.3,278.3 1452.0,278.3 1450.7,278.3 1449.4,278.4 1448.1,278.4 1446.8,278.4 1445.5,278.4 1444.2,278.4 1442.9,278.4" fill="#ffff00" stroke="#ffff00" stroke-width="1.1"/><polyline points="1442.9,278.4 1444.2,278.4 1445.5,278.4 1446.8,278.4 1448.1,278.4 1449.4,278.4 1450.7,278.4 1452.0,278.4 1453.3,278.3 1454.6,278.3 1455.9,278.3 1457.2,278.3 1458.5,278.2 1459.8,278.1 1461.1,278.1 1462.4,277.9 1463.7,277.8 1465.0,277.6 1466.3,277.3 1467.6,277.0 1468.9,276.5 1470.2,275.9 1471.5,275.1 1472.8,274.0 1474.1,272.7 1475.4,271.1 1476.7,269.2 1478.0,266.8 1479.3,264.1 1480.6,261.0 1481.9,257.6 1483.2,253.9 1484.5,250.0 1485.8,245.9 1487.1,241.7 1488.4,237.4 1489.7,233.2 1491.0,228.9 1492.3,224.8 1493.6,220.7 1494.9,216.7 1496.2,212.8 1497.4,209.1 1498.7,205.4 1500.0,201.9 1501.3,198.5 1502.6,195.1 1503.9,191.9 1505.2,188.8 1506.5,185.9 1507.8,183.0 1509.1,180.2 1510.4,177.5 1511.7,174.9 1513.0,172.4 1514.3,170.0 1515.6,167.6 1516.9,165.4 1518.2,163.2 1519.5,161.1 1520.8,159.1 1522.1,157.1 1523.4,155.2 1524.7,153.4 1526.0,151.6 1527.3,149.9 1528.6,148.3 1529.9,146.7 1531.2,145.2 1532.5,143.7 1533.8,142.3 1535.1,140.9 1536.4,139.6 1537.7,138.3 1539.0,137.1 1540.3,135.9 1541.6,134.8 1542.9,133.7 1544.2,132.6 1545.5,131.6 1546.8,130.6 1548.1,129.6 1549.4,128.7 1550.7,127.8 1552.0,126.9 1553.3,126.1 1554.6,125.3 1555.9,124.5 1557.2,123.8 1558.5,123.0 1559.8,122.3" stroke="#806000" stroke-width="0.3"/><polyline points="1442.9,278.4 1444.2,278.4 1445.5,278.4 1446.8,278.4 1448.1,278.3 1449.4,278.3 1450.7,278.3 1452.0,278.2 1453.3,278.2 1454.6,278.1 1455.9,278.0 1457.2,277.9 1458.5,277.7 1459.8,277.5 1461.1,277.2 1462.4,276.8 1463.7,276.3 1465.0,275.7 1466.3,274.8 1467.6,273.7 1468.9,272.3 1470.2,270.5 1471.5,268.4 1472.8,265.9 1474.1,263.0 1475.4,259.7 1476.7,256.0 1478.0,252.1 1479.3,247.9 1480.6,243.5 1481.9,239.0 1483.2,234.5 1484.5,229.9 1485.8,225.4 1487.1,221.0 1488.4,216.7 1489.7,212.4 1491.0,208.3 1492.3,204.3 1493.6,200.4 1494.9,196.6 1496.2,193.0 1497.4,189.5 1498.7,186.0 1500.0,182.8 1501.3,179.6 1502.6,176.5 1503.9,173.5 1505.2,170.7 1506.5,167.9 1507.8,165.2 1509.1,162.7 1510.4,160.2 1511.7,157.8 1513.0,155.5 1514.3,153.2 1515.6,151.1 1516.9,149.0 1518.2,147.0 1519.5,145.0 1520.8,143.2 1522.1,141.4 1523.4,139.6 1524.7,137.9 1526.0,136.3 1527.3,134.7 1528.6,133.2 1529.9,131.8 1531.2,130.4 1532.5,129.0 1533.8,127.7 1535.1,126.4 1536.4,125.2 1537.7,124.0 1539.0,122.9 1540.3,121.8 1541.6,120.7 1542.9,119.7 1544.2,118.7 1545.5,117.8 1546.8,116.9 1548.1,116.0 1549.4,115.1 1550.7,114.3 1552.0,113.5 1553.3,112.7 1554.6,112.0 1555.9,111.3 1557.2,110.6 1558.5,109.9 1559.8,109.3" stroke="#900000" stroke-width="0.35"/><polyline points="1442.9,278.4 1444.2,278.4 1445.5,278.4 1446.8,278.4 1448.1,278.4 1449.4,278.4 1450.7,278.3 1452.0,278.3 1453.3,278.3 1454.6,278.2 1455.9,278.2 1457.2,278.1 1458.5,278.0 1459.8,277.9 1461.1,277.7 1462.4,277.5 1463.7,277.2 1465.0,276.8 1466.3,276.3 1467.6,275.6 1468.9,274.7 1470.2,273.6 1471.5,272.2 1472.8,270.4 1474.1,268.3 1475.4,265.8 1476.7,262.9 1478.0,259.7 1479.3,256.1 1480.6,252.2 1481.9,248.1 1483.2,243.8 1484.5,239.5 1485.8,235.1 1487.1,230.8 1488.4,226.4 1489.7,222.2 1491.0,218.0 1492.3,213.9 1493.6,210.0 1494.9,206.1 1496.2,202.4 1497.4,198.8 1498.7,195.3 1500.0,191.9 1501.3,188.6 1502.6,185.4 1503.9,182.4 1505.2,179.5 1506.5,176.6 1507.8,173.9 1509.1,171.2 1510.4,168.7 1511.7,166.2 1513.0,163.8 1514.3,161.5 1515.6,159.3 1516.9,157.1 1518.2,155.1 1519.5,153.1 1520.8,151.2 1522.1,149.3 1523.4,147.5 1524.7,145.8 1526.0,144.1 1527.3,142.5 1528.6,140.9 1529.9,139.4 1531.2,138.0 1532.5,136.6 1533.8,135.2 1535.1,133.9 1536.4,132.7 1537.7,131.5 1539.0,130.3 1540.3,129.2 1541.6,128.1 1542.9,127.0 1544.2,126.0 1545.5,125.0 1546.8,124.1 1548.1,123.2 1549.4,122.3 1550.7,121.4 1552.0,120.6 1553.3,119.8 1554.6,119.1 1555.9,118.3 1557.2,117.6 1558.5,116.9 1559.8,116.3" stroke="#c02000" stroke-width="0.45"/></g><rect x="1340.6" y="91.5" width="219.2" height="186.9" fill="none" stroke="#a4a4a4" stroke-width="1"/><path d="M1355.2 91.5v4.6M1355.2 278.4v-4.6M1369.8 91.5v4.6M1369.8 278.4v-4.6M1384.4 91.5v4.6M1384.4 278.4v-4.6M1399.1 91.5v4.6M1399.1 278.4v-4.6M1413.7 91.5v4.6M1413.7 278.4v-4.6M1428.3 91.5v4.6M1428.3 278.4v-4.6M1442.9 91.5v4.6M1442.9 278.4v-4.6M1457.5 91.5v4.6M1457.5 278.4v-4.6M1472.1 91.5v4.6M1472.1 278.4v-4.6M1486.7 91.5v4.6M1486.7 278.4v-4.6M1501.3 91.5v4.6M1501.3 278.4v-4.6M1516.0 91.5v4.6M1516.0 278.4v-4.6M1530.6 91.5v4.6M1530.6 278.4v-4.6M1545.2 91.5v4.6M1545.2 278.4v-4.6M1340.6 100.8h4.6M1340.6 110.2h4.6M1340.6 119.5h4.6M1340.6 128.9h4.6M1340.6 138.2h6M1340.6 147.6h4.6M1340.6 156.9h4.6M1340.6 166.3h4.6M1340.6 175.6h4.6M1340.6 184.9h6M1340.6 194.3h4.6M1340.6 203.6h4.6M1340.6 213.0h4.6M1340.6 222.3h4.6M1340.6 231.7h6M1340.6 241.0h4.6M1340.6 250.4h4.6M1340.6 259.7h4.6M1340.6 269.1h4.6" stroke="#8c8c8c" stroke-width="1"/><path d="M1323.0 147V210.6" stroke="#b8b000" stroke-width="1.2"/><path d="M1323.0 216V278.4" stroke="#c40000" stroke-width="1.2"/><text x="1337.2" y="281.5" text-anchor="end" font-size="10.5" fill="#e2e2e2">0</text><text x="1337.2" y="234.8" text-anchor="end" font-size="10.5" fill="#e2e2e2">1</text><text x="1337.2" y="188.0" text-anchor="end" font-size="10.5" fill="#e2e2e2">2</text><text x="1337.2" y="141.3" text-anchor="end" font-size="10.5" fill="#e2e2e2">3</text><text x="1337.2" y="94.6" text-anchor="end" font-size="10.5" fill="#e2e2e2">4</text><text x="1340.0" y="291.0" text-anchor="middle" font-size="10.5" fill="#e2e2e2">-0.5</text><text x="1413.9" y="291.0" text-anchor="middle" font-size="10.5" fill="#e2e2e2">0.0</text><text x="1486.9" y="291.0" text-anchor="middle" font-size="10.5" fill="#e2e2e2">0.5</text><text x="1560.0" y="291.0" text-anchor="middle" font-size="10.5" fill="#e2e2e2">1.0</text><text x="1450.0" y="306" text-anchor="middle" font-size="13" fill="#e2e2e2" xml:space="preserve" textLength="45.6" lengthAdjust="spacingAndGlyphs">vg  [E+0]</text><text transform="translate(1315.0,277.6) rotate(-90)" font-size="13" fill="#e2e2e2" textLength="61.6" lengthAdjust="spacingAndGlyphs">myModel_1</text><text transform="translate(1315.0,210.4) rotate(-90)" font-size="13" fill="#e2e2e2" textLength="62.4" lengthAdjust="spacingAndGlyphs">myModel_2</text><text transform="translate(1319.4,140.6) rotate(-90)" font-size="13" fill="#e2e2e2" textLength="21.6" lengthAdjust="spacingAndGlyphs">[E-3]</text><text x="1306.0" y="78" font-size="13" fill="#ececec" textLength="265.0" lengthAdjust="spacing">Plot QA_Result/DC_IV_D1_Tnom/idvg/gm_plot</text><rect x="1577.9" y="66.5" width="20.6" height="20.8" fill="none" stroke="#9a9a9a"/><path d="M1577.9 73.4h14.4v13.9M1577.9 81h7.3v6.3" fill="none" stroke="#9a9a9a"/><rect x="1577.9" y="92.8" width="20.6" height="20.4" fill="none" stroke="#9a9a9a"/><rect x="1577.4" y="113.2" width="21.6" height="21.6" fill="#ffa400"/><text x="1588.4" y="106" text-anchor="middle" font-size="10.8" fill="#f0f0f0">PO</text><text x="1588.2" y="126.8" text-anchor="middle" font-size="10.8" fill="#fff">A</text><rect x="1577.9" y="273.5" width="20.6" height="20.9" fill="none" stroke="#9a9a9a"/><rect x="1577.9" y="294.4" width="20.6" height="21.2" fill="none" stroke="#9a9a9a"/><text x="1588.2" y="287.2" text-anchor="middle" font-size="10.6" fill="#f0f0f0">X</text><text x="1588.2" y="308.2" text-anchor="middle" font-size="10.6" fill="#f0f0f0">Y</text></svg>
</body></html>
